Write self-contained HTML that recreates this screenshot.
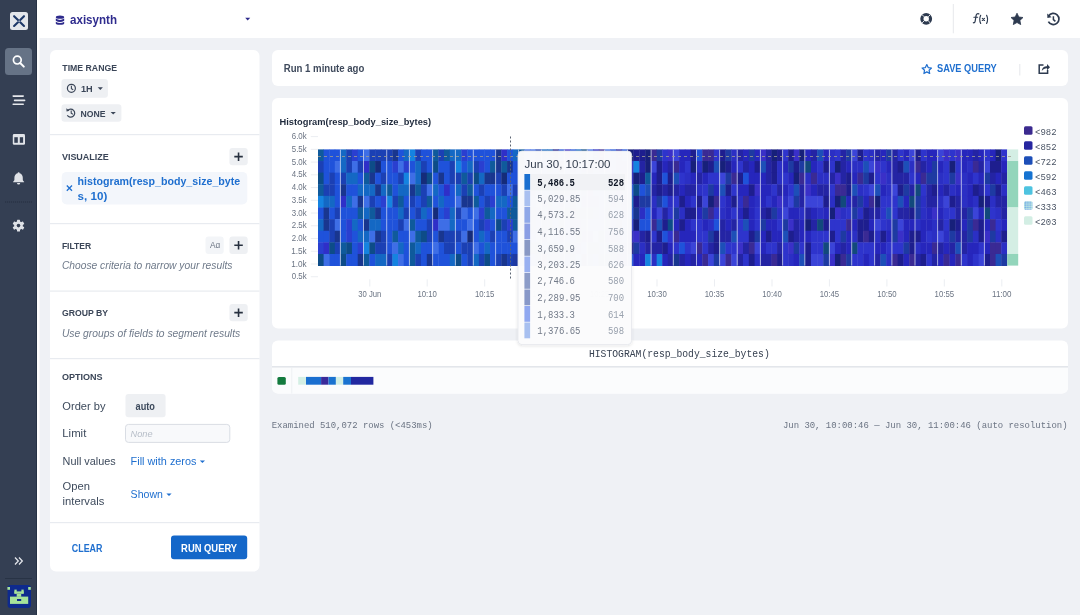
<!DOCTYPE html><html><head><meta charset="utf-8"><style>
html,body{margin:0;padding:0;width:1080px;height:615px;overflow:hidden;background:#eff1f5}
svg{display:block;will-change:transform}
</style></head><body><svg width="1080" height="615" viewBox="0 0 1080 615">
<rect x="0" y="0" width="1080" height="615" fill="#eff1f5"/>
<rect x="0" y="0" width="36" height="615" fill="#343f53"/>
<rect x="36" y="0" width="1" height="615" fill="#273245"/>
<rect x="37" y="0" width="1043" height="38" fill="#ffffff"/>
<rect x="37" y="0" width="2.5" height="615" fill="#ffffff"/>
<rect x="10" y="12" width="18" height="18" rx="2.5" fill="#e3e6eb"/><path d="M14.1 16.2 L18 20.1 M20.2 22.3 L24 26 M24 16.2 L20.2 20.1 M18 22.3 L14.1 26" stroke="#1d3868" stroke-width="2.1" stroke-linecap="round"/><rect x="5" y="48" width="27" height="27" rx="3.5" fill="#667386"/><circle cx="17.3" cy="60.1" r="3.9" fill="none" stroke="#fff" stroke-width="1.7"/><path d="M20.2 63 L23.8 66.6" stroke="#fff" stroke-width="2" stroke-linecap="round"/><path d="M13.2 96.1 H23.2 M14.6 100.4 H24.6 M13.2 104.3 H23.2" stroke="#e6e8ec" stroke-width="1.6" stroke-linecap="round"/><rect x="12.8" y="134.1" width="12.2" height="10.7" rx="1.3" fill="#e1e4e9"/><rect x="14.3" y="137.2" width="3.5" height="5.6" fill="#343f53"/><rect x="19.8" y="137.2" width="3.3" height="5.6" fill="#343f53"/><path d="M18.6 172.3 c-0.6 0 -1 0.4 -1 0.9 c-2.1 0.5 -3.2 2.4 -3.2 4.6 v1.8 c0 0.9 -0.6 1.6 -1.3 2.1 v0.6 h11 v-0.6 c-0.7 -0.5 -1.3 -1.2 -1.3 -2.1 v-1.8 c0 -2.2 -1.1 -4.1 -3.2 -4.6 c0 -0.5 -0.4 -0.9 -1 -0.9z M17 182.9 h3.2 a1.6 1.5 0 0 1 -3.2 0z" fill="#dfe2e7"/><path d="M5 202 H32" stroke="#252f40" stroke-width="1" stroke-dasharray="1.2 0.8"/><g transform="translate(18.5 225.6)" fill="#dfe2e7"><circle r="4.3"/><rect x="-1.5" y="-5.9" width="3" height="3" rx="0.5" transform="rotate(0)"/><rect x="-1.5" y="-5.9" width="3" height="3" rx="0.5" transform="rotate(60)"/><rect x="-1.5" y="-5.9" width="3" height="3" rx="0.5" transform="rotate(120)"/><rect x="-1.5" y="-5.9" width="3" height="3" rx="0.5" transform="rotate(180)"/><rect x="-1.5" y="-5.9" width="3" height="3" rx="0.5" transform="rotate(240)"/><rect x="-1.5" y="-5.9" width="3" height="3" rx="0.5" transform="rotate(300)"/><circle r="1.8" fill="#343f53"/></g><path d="M15 557.5 L18.3 561 L15 564.5 M19 557.5 L22.3 561 L19 564.5" fill="none" stroke="#e1e4e9" stroke-width="1.3"/><path d="M5 578.5 H32" stroke="#283345" stroke-width="1"/><rect x="7.6" y="585" width="23.4" height="23" rx="3" fill="#0e2a8e"/><g fill="#a6e29a"><rect x="7.4" y="587" width="2.6" height="2.8"/><rect x="28.2" y="587" width="2.6" height="2.8"/><rect x="14.4" y="589.6" width="2.3" height="4"/><rect x="21.4" y="589.6" width="2.3" height="4"/><rect x="14.4" y="591.4" width="9.3" height="2.3"/><rect x="16.7" y="593.6" width="4.5" height="3.2"/><rect x="10" y="596.6" width="18.2" height="7.3"/></g><rect x="17" y="599" width="4.2" height="2" fill="#0e2a8e"/>
<g fill="#2e2b8c"><ellipse cx="60" cy="17.2" rx="4.2" ry="1.6"/><path d="M55.8 18.6 q4.2 2.6 8.4 0 v2.2 q-4.2 2.6 -8.4 0z"/><path d="M55.8 21.8 q4.2 2.6 8.4 0 v1.6 q0 1.4 -4.2 1.4 q-4.2 0 -4.2 -1.4z"/></g><path d="M245.2 17.8 H250.2 L247.7 20.5z" fill="#2e2b8c"/><circle cx="926.2" cy="18.8" r="5.9" fill="#2d3a4f"/><circle cx="926.2" cy="18.8" r="2.7" fill="#fff"/><path d="M922.1 14.7 L924.2 16.8 M930.3 14.7 L928.2 16.8 M922.1 22.9 L924.2 20.8 M930.3 22.9 L928.2 20.8" stroke="#fff" stroke-width="0.9"/><path d="M953.3 4 V33.3" stroke="#e6e8ec" stroke-width="1"/><path d="M1017 13.2 L1018.8 17 L1023 17.5 L1019.9 20.4 L1020.7 24.6 L1017 22.5 L1013.3 24.6 L1014.1 20.4 L1011 17.5 L1015.2 17z" fill="#2d3a4f" stroke="#2d3a4f" stroke-width="0.8" stroke-linejoin="round"/><path d="M1048.6 16 A5.6 5.6 0 1 1 1048.4 21.6" fill="none" stroke="#2d3a4f" stroke-width="1.7"/><path d="M1047.2 13.4 L1047.4 18 L1051.6 17.2z" fill="#2d3a4f"/><path d="M1053.4 16.2 V19.6 L1055.4 21.4" fill="none" stroke="#2d3a4f" stroke-width="1.5"/>
<text x="70.00" y="24" font-family="Liberation Sans" font-size="12.8" font-weight="bold" fill="#2f2c8e" textLength="47.00" lengthAdjust="spacingAndGlyphs">axisynth</text>
<g fill="none" stroke="#2d3a4f" stroke-linecap="round"><path d="M978.8 13.9 C977.3 13.3 976.3 14.2 976 16 L975.2 21 C974.9 22.6 974.2 23 973.4 22.7" stroke-width="1.25"/><path d="M973.9 17.2 H977.6" stroke-width="1.15"/><path d="M980.7 15.3 Q978.7 19.4 980.7 23.5" stroke-width="1.15"/><path d="M986.6 15.3 Q988.6 19.4 986.6 23.5" stroke-width="1.15"/><path d="M982.3 18.3 L984.5 20.5 M984.5 18.3 L982.3 20.5" stroke-width="1.1"/></g>
<rect x="50" y="50" width="209.5" height="521.5" rx="6" fill="#ffffff"/>
<text x="62.30" y="71" font-family="Liberation Sans" font-size="9.8" font-weight="bold" fill="#3b4658" textLength="54.80" lengthAdjust="spacingAndGlyphs">TIME RANGE</text>
<rect x="61.5" y="79" width="46.4" height="18.7" rx="3" fill="#eef0f3"/>
<circle cx="71.4" cy="88.3" r="4" fill="none" stroke="#3b4658" stroke-width="1.2"/><path d="M71.4 85.8 V88.6 L73.2 89.8" fill="none" stroke="#3b4658" stroke-width="1.1"/>
<text x="80.90" y="92" font-family="Liberation Sans" font-size="9.5" font-weight="bold" fill="#3b4658" textLength="11.70" lengthAdjust="spacingAndGlyphs">1H</text>
<path d="M97.7 87.3 H102.9 L100.3 89.89999999999999z" fill="#3b4658"/>
<rect x="61.5" y="104.3" width="59.9" height="17.5" rx="3" fill="#eef0f3"/>
<path d="M67.6 110.6 A4 4 0 1 1 67.3 115.2" fill="none" stroke="#3b4658" stroke-width="1.2"/><path d="M66.3 108.2 L66.6 111.6 L69.6 110.8z" fill="#3b4658"/><path d="M71.2 110.5 V113.2 L72.9 114.3" fill="none" stroke="#3b4658" stroke-width="1.1"/>
<text x="80.60" y="117" font-family="Liberation Sans" font-size="9.5" font-weight="bold" fill="#3b4658" textLength="25.00" lengthAdjust="spacingAndGlyphs">NONE</text>
<path d="M110.6 112 H115.8 L113.19999999999999 114.6z" fill="#3b4658"/>
<rect x="50" y="134" width="209.5" height="1.2" fill="#e8ebf0"/>
<text x="61.90" y="160" font-family="Liberation Sans" font-size="9.8" font-weight="bold" fill="#3b4658" textLength="46.90" lengthAdjust="spacingAndGlyphs">VISUALIZE</text>
<rect x="229.4" y="148" width="18.3" height="17.3" rx="3" fill="#eef0f3"/>
<path d="M238.55 152.4 V160.9 M234.3 156.65 H242.8" stroke="#27303f" stroke-width="1.6"/>
<rect x="61.7" y="171.9" width="185.6" height="32.5" rx="5" fill="#f3f6fb"/>
<path d="M66.8 185.5 L72 190.7 M72 185.5 L66.8 190.7" stroke="#1f6fcf" stroke-width="1.3"/>
<text x="77.60" y="185" font-family="Liberation Sans" font-size="11.6" font-weight="bold" fill="#1f6fcf" textLength="162.60" lengthAdjust="spacingAndGlyphs">histogram(resp_body_size_byte</text>
<text x="77.60" y="200" font-family="Liberation Sans" font-size="11.6" font-weight="bold" fill="#1f6fcf">s, 10)</text>
<rect x="50" y="223" width="209.5" height="1.2" fill="#e8ebf0"/>
<text x="61.90" y="249" font-family="Liberation Sans" font-size="9.8" font-weight="bold" fill="#3b4658" textLength="29.30" lengthAdjust="spacingAndGlyphs">FILTER</text>
<rect x="205.5" y="236.6" width="18.2" height="17.3" rx="3" fill="#f3f5f8"/>
<text x="209.90" y="248" font-family="Liberation Sans" font-size="9.2" fill="#6b7483" textLength="10.20" lengthAdjust="spacingAndGlyphs">Aɑ</text>
<rect x="229.4" y="236.6" width="18.3" height="17.3" rx="3" fill="#eef0f3"/>
<path d="M238.55 241.0 V249.5 M234.3 245.25 H242.8" stroke="#27303f" stroke-width="1.6"/>
<text x="61.90" y="269" font-family="Liberation Sans" font-size="10.2" font-style="italic" fill="#6f7a8a" textLength="170.50" lengthAdjust="spacingAndGlyphs">Choose criteria to narrow your results</text>
<rect x="50" y="290.5" width="209.5" height="1.2" fill="#e8ebf0"/>
<text x="61.90" y="316" font-family="Liberation Sans" font-size="9.8" font-weight="bold" fill="#3b4658" textLength="46.20" lengthAdjust="spacingAndGlyphs">GROUP BY</text>
<rect x="229.4" y="304" width="18.3" height="17.3" rx="3" fill="#eef0f3"/>
<path d="M238.55 308.4 V316.9 M234.3 312.65 H242.8" stroke="#27303f" stroke-width="1.6"/>
<text x="61.90" y="337" font-family="Liberation Sans" font-size="10.2" font-style="italic" fill="#6f7a8a" textLength="178.30" lengthAdjust="spacingAndGlyphs">Use groups of fields to segment results</text>
<rect x="50" y="358" width="209.5" height="1.2" fill="#e8ebf0"/>
<text x="61.90" y="380" font-family="Liberation Sans" font-size="9.8" font-weight="bold" fill="#3b4658" textLength="40.70" lengthAdjust="spacingAndGlyphs">OPTIONS</text>
<text x="62.30" y="410" font-family="Liberation Sans" font-size="11.2" fill="#3d4a5c" textLength="43.20" lengthAdjust="spacingAndGlyphs">Order by</text>
<rect x="125.5" y="393.9" width="40.1" height="23.4" rx="3" fill="#eef0f3"/>
<text x="135.60" y="410" font-family="Liberation Sans" font-size="10.6" font-weight="bold" fill="#3d4a5c" textLength="19.40" lengthAdjust="spacingAndGlyphs">auto</text>
<text x="62.30" y="437" font-family="Liberation Sans" font-size="11.2" fill="#3d4a5c" textLength="24.00" lengthAdjust="spacingAndGlyphs">Limit</text>
<rect x="125.5" y="424.4" width="104.3" height="18" rx="3" fill="#f8f9fb" stroke="#d9dde4" stroke-width="1"/>
<text x="130.60" y="437" font-family="Liberation Sans" font-size="9.5" font-style="italic" fill="#b7bec8" textLength="22.00" lengthAdjust="spacingAndGlyphs">None</text>
<text x="62.60" y="465" font-family="Liberation Sans" font-size="11.2" fill="#3d4a5c" textLength="53.10" lengthAdjust="spacingAndGlyphs">Null values</text>
<text x="130.60" y="465" font-family="Liberation Sans" font-size="11.2" fill="#1f6fcf" textLength="65.90" lengthAdjust="spacingAndGlyphs">Fill with zeros</text>
<path d="M199.8 460.5 H205.0 L202.4 463.1z" fill="#1f6fcf"/>
<text x="62.60" y="490" font-family="Liberation Sans" font-size="11.2" fill="#3d4a5c">Open</text>
<text x="62.60" y="505" font-family="Liberation Sans" font-size="11.2" fill="#3d4a5c">intervals</text>
<text x="130.60" y="498" font-family="Liberation Sans" font-size="11.2" fill="#1f6fcf" textLength="32.30" lengthAdjust="spacingAndGlyphs">Shown</text>
<path d="M166.4 493.5 H171.6 L169.0 496.1z" fill="#1f6fcf"/>
<rect x="50" y="522" width="209.5" height="1.2" fill="#e8ebf0"/>
<text x="71.80" y="551.5" font-family="Liberation Sans" font-size="10.4" font-weight="bold" fill="#1f6fcf" textLength="30.70" lengthAdjust="spacingAndGlyphs">CLEAR</text>
<rect x="171" y="535.5" width="76.2" height="23.7" rx="3" fill="#1467c9"/>
<text x="181.10" y="551.5" font-family="Liberation Sans" font-size="10.4" font-weight="bold" fill="#ffffff" textLength="56.00" lengthAdjust="spacingAndGlyphs">RUN QUERY</text>
<rect x="272" y="50" width="796" height="36" rx="6" fill="#ffffff"/>
<text x="283.70" y="72" font-family="Liberation Sans" font-size="10" font-weight="bold" fill="#3f4a5c" textLength="80.70" lengthAdjust="spacingAndGlyphs">Run 1 minute ago</text>
<path d="M926.8 64.6 L928.2 67.6 L931.5 68 L929.1 70.3 L929.7 73.5 L926.8 71.9 L923.9 73.5 L924.5 70.3 L922.1 68 L925.4 67.6z" fill="none" stroke="#1f6fcf" stroke-width="1.2" stroke-linejoin="round"/>
<text x="937.00" y="72" font-family="Liberation Sans" font-size="10.4" font-weight="bold" fill="#1f6fcf" textLength="59.70" lengthAdjust="spacingAndGlyphs">SAVE QUERY</text>
<rect x="1019.3" y="64" width="1" height="11.5" fill="#e5e7eb"/>
<path d="M1043.5 65 H1039.2 V73.2 H1047.6 V70" fill="none" stroke="#2d3a4f" stroke-width="1.5"/><path d="M1041.8 71 C1042 67.5 1044.5 66.2 1047 66.2 V64 L1050 67.2 L1047 70.2 V68.2 C1045 68.2 1043 69 1041.8 71z" fill="#2d3a4f"/>
<rect x="272" y="98" width="796" height="230.5" rx="6" fill="#ffffff"/>
<text x="279.50" y="125" font-family="Liberation Sans" font-size="9.4" font-weight="bold" fill="#1f2a3c" textLength="151.60" lengthAdjust="spacingAndGlyphs">Histogram(resp_body_size_bytes)</text>
<rect x="310.8" y="136.1" width="7.2" height="1" fill="#eceef2"/>
<text x="291.80" y="139" font-family="Liberation Sans" font-size="8.2" fill="#6b7483" textLength="14.89" lengthAdjust="spacingAndGlyphs">6.0k</text>
<rect x="310.8" y="148.84" width="7.2" height="1" fill="#eceef2"/>
<text x="291.80" y="152" font-family="Liberation Sans" font-size="8.2" fill="#6b7483" textLength="14.89" lengthAdjust="spacingAndGlyphs">5.5k</text>
<rect x="310.8" y="161.57999999999998" width="7.2" height="1" fill="#eceef2"/>
<text x="291.80" y="165" font-family="Liberation Sans" font-size="8.2" fill="#6b7483" textLength="14.89" lengthAdjust="spacingAndGlyphs">5.0k</text>
<rect x="310.8" y="174.32" width="7.2" height="1" fill="#eceef2"/>
<text x="291.80" y="177" font-family="Liberation Sans" font-size="8.2" fill="#6b7483" textLength="14.89" lengthAdjust="spacingAndGlyphs">4.5k</text>
<rect x="310.8" y="187.06" width="7.2" height="1" fill="#eceef2"/>
<text x="291.80" y="190" font-family="Liberation Sans" font-size="8.2" fill="#6b7483" textLength="14.89" lengthAdjust="spacingAndGlyphs">4.0k</text>
<rect x="310.8" y="199.8" width="7.2" height="1" fill="#eceef2"/>
<text x="291.80" y="203" font-family="Liberation Sans" font-size="8.2" fill="#6b7483" textLength="14.89" lengthAdjust="spacingAndGlyphs">3.5k</text>
<rect x="310.8" y="212.54" width="7.2" height="1" fill="#eceef2"/>
<text x="291.80" y="216" font-family="Liberation Sans" font-size="8.2" fill="#6b7483" textLength="14.89" lengthAdjust="spacingAndGlyphs">3.0k</text>
<rect x="310.8" y="225.28" width="7.2" height="1" fill="#eceef2"/>
<text x="291.80" y="228" font-family="Liberation Sans" font-size="8.2" fill="#6b7483" textLength="14.89" lengthAdjust="spacingAndGlyphs">2.5k</text>
<rect x="310.8" y="238.01999999999998" width="7.2" height="1" fill="#eceef2"/>
<text x="291.80" y="241" font-family="Liberation Sans" font-size="8.2" fill="#6b7483" textLength="14.89" lengthAdjust="spacingAndGlyphs">2.0k</text>
<rect x="310.8" y="250.76" width="7.2" height="1" fill="#eceef2"/>
<text x="291.19" y="254" font-family="Liberation Sans" font-size="8.2" fill="#6b7483">1.5k</text>
<rect x="310.8" y="263.5" width="7.2" height="1" fill="#eceef2"/>
<text x="291.19" y="267" font-family="Liberation Sans" font-size="8.2" fill="#6b7483">1.0k</text>
<rect x="310.8" y="276.24" width="7.2" height="1" fill="#eceef2"/>
<text x="291.80" y="279" font-family="Liberation Sans" font-size="8.2" fill="#6b7483" textLength="14.89" lengthAdjust="spacingAndGlyphs">0.5k</text>
<g><rect x="318.00" y="149.40" width="6.00" height="12.02" fill="#0f5a9c"/><rect x="318.00" y="161.02" width="6.00" height="12.02" fill="#1b40b4"/><rect x="318.00" y="172.64" width="6.00" height="12.02" fill="#0d4c88"/><rect x="318.00" y="184.26" width="6.00" height="12.02" fill="#0f5a9c"/><rect x="318.00" y="195.88" width="6.00" height="12.02" fill="#1583e0"/><rect x="318.00" y="207.50" width="6.00" height="12.02" fill="#1f52da"/><rect x="318.00" y="219.12" width="6.00" height="12.02" fill="#1468c4"/><rect x="318.00" y="230.74" width="6.00" height="12.02" fill="#1f52da"/><rect x="318.00" y="242.36" width="6.00" height="12.02" fill="#2a3fd0"/><rect x="318.00" y="253.98" width="6.00" height="12.02" fill="#0d4c88"/><rect x="323.60" y="149.40" width="6.00" height="12.02" fill="#1f52da"/><rect x="323.60" y="161.02" width="6.00" height="12.02" fill="#1f52da"/><rect x="323.60" y="172.64" width="6.00" height="12.02" fill="#1f52da"/><rect x="323.60" y="184.26" width="6.00" height="12.02" fill="#1b40b4"/><rect x="323.60" y="195.88" width="6.00" height="12.02" fill="#1468c4"/><rect x="323.60" y="207.50" width="6.00" height="12.02" fill="#19368f"/><rect x="323.60" y="219.12" width="6.00" height="12.02" fill="#19368f"/><rect x="323.60" y="230.74" width="6.00" height="12.02" fill="#1f52da"/><rect x="323.60" y="242.36" width="6.00" height="12.02" fill="#2f2fc8"/><rect x="323.60" y="253.98" width="6.00" height="12.02" fill="#3e6ee6"/><rect x="329.20" y="149.40" width="6.00" height="12.02" fill="#1f52da"/><rect x="329.20" y="161.02" width="6.00" height="12.02" fill="#1f52da"/><rect x="329.20" y="172.64" width="6.00" height="12.02" fill="#1b40b4"/><rect x="329.20" y="184.26" width="6.00" height="12.02" fill="#1b40b4"/><rect x="329.20" y="195.88" width="6.00" height="12.02" fill="#1468c4"/><rect x="329.20" y="207.50" width="6.00" height="12.02" fill="#1f52da"/><rect x="329.20" y="219.12" width="6.00" height="12.02" fill="#1b40b4"/><rect x="329.20" y="230.74" width="6.00" height="12.02" fill="#1b40b4"/><rect x="329.20" y="242.36" width="6.00" height="12.02" fill="#0d4c88"/><rect x="329.20" y="253.98" width="6.00" height="12.02" fill="#1f52da"/><rect x="334.80" y="149.40" width="6.00" height="12.02" fill="#1f52da"/><rect x="334.80" y="161.02" width="6.00" height="12.02" fill="#3e6ee6"/><rect x="334.80" y="172.64" width="6.00" height="12.02" fill="#1f52da"/><rect x="334.80" y="184.26" width="6.00" height="12.02" fill="#1f52da"/><rect x="334.80" y="195.88" width="6.00" height="12.02" fill="#1f52da"/><rect x="334.80" y="207.50" width="6.00" height="12.02" fill="#1b40b4"/><rect x="334.80" y="219.12" width="6.00" height="12.02" fill="#3e6ee6"/><rect x="334.80" y="230.74" width="6.00" height="12.02" fill="#19368f"/><rect x="334.80" y="242.36" width="6.00" height="12.02" fill="#1b40b4"/><rect x="334.80" y="253.98" width="6.00" height="12.02" fill="#1f52da"/><rect x="340.40" y="149.40" width="6.18" height="12.02" fill="#1468c4"/><rect x="340.40" y="161.02" width="6.18" height="12.02" fill="#1468c4"/><rect x="340.40" y="172.64" width="6.18" height="12.02" fill="#1b40b4"/><rect x="340.40" y="184.26" width="6.18" height="12.02" fill="#19368f"/><rect x="340.40" y="195.88" width="6.18" height="12.02" fill="#2f2fc8"/><rect x="340.40" y="207.50" width="6.18" height="12.02" fill="#1f52da"/><rect x="340.40" y="219.12" width="6.18" height="12.02" fill="#1f52da"/><rect x="340.40" y="230.74" width="6.18" height="12.02" fill="#1f52da"/><rect x="340.40" y="242.36" width="6.18" height="12.02" fill="#0f5a9c"/><rect x="340.40" y="253.98" width="6.18" height="12.02" fill="#0d4c88"/><rect x="346.17" y="149.40" width="6.18" height="12.02" fill="#1b40b4"/><rect x="346.17" y="161.02" width="6.18" height="12.02" fill="#1b40b4"/><rect x="346.17" y="172.64" width="6.18" height="12.02" fill="#1468c4"/><rect x="346.17" y="184.26" width="6.18" height="12.02" fill="#1f52da"/><rect x="346.17" y="195.88" width="6.18" height="12.02" fill="#1468c4"/><rect x="346.17" y="207.50" width="6.18" height="12.02" fill="#1f52da"/><rect x="346.17" y="219.12" width="6.18" height="12.02" fill="#2a3fd0"/><rect x="346.17" y="230.74" width="6.18" height="12.02" fill="#2a3fd0"/><rect x="346.17" y="242.36" width="6.18" height="12.02" fill="#0d4c88"/><rect x="346.17" y="253.98" width="6.18" height="12.02" fill="#1f52da"/><rect x="351.95" y="149.40" width="6.18" height="12.02" fill="#2a3fd0"/><rect x="351.95" y="161.02" width="6.18" height="12.02" fill="#3e6ee6"/><rect x="351.95" y="172.64" width="6.18" height="12.02" fill="#1468c4"/><rect x="351.95" y="184.26" width="6.18" height="12.02" fill="#1f52da"/><rect x="351.95" y="195.88" width="6.18" height="12.02" fill="#3e6ee6"/><rect x="351.95" y="207.50" width="6.18" height="12.02" fill="#1f52da"/><rect x="351.95" y="219.12" width="6.18" height="12.02" fill="#1468c4"/><rect x="351.95" y="230.74" width="6.18" height="12.02" fill="#1f52da"/><rect x="351.95" y="242.36" width="6.18" height="12.02" fill="#1f52da"/><rect x="351.95" y="253.98" width="6.18" height="12.02" fill="#1f52da"/><rect x="357.73" y="149.40" width="6.18" height="12.02" fill="#1f52da"/><rect x="357.73" y="161.02" width="6.18" height="12.02" fill="#1b40b4"/><rect x="357.73" y="172.64" width="6.18" height="12.02" fill="#1f52da"/><rect x="357.73" y="184.26" width="6.18" height="12.02" fill="#1468c4"/><rect x="357.73" y="195.88" width="6.18" height="12.02" fill="#19368f"/><rect x="357.73" y="207.50" width="6.18" height="12.02" fill="#0f5a9c"/><rect x="357.73" y="219.12" width="6.18" height="12.02" fill="#1f52da"/><rect x="357.73" y="230.74" width="6.18" height="12.02" fill="#1468c4"/><rect x="357.73" y="242.36" width="6.18" height="12.02" fill="#2a3fd0"/><rect x="357.73" y="253.98" width="6.18" height="12.02" fill="#19368f"/><rect x="363.50" y="149.40" width="6.20" height="12.02" fill="#3e6ee6"/><rect x="363.50" y="161.02" width="6.20" height="12.02" fill="#2f2fc8"/><rect x="363.50" y="172.64" width="6.20" height="12.02" fill="#0f5a9c"/><rect x="363.50" y="184.26" width="6.20" height="12.02" fill="#1468c4"/><rect x="363.50" y="195.88" width="6.20" height="12.02" fill="#3e6ee6"/><rect x="363.50" y="207.50" width="6.20" height="12.02" fill="#1468c4"/><rect x="363.50" y="219.12" width="6.20" height="12.02" fill="#19368f"/><rect x="363.50" y="230.74" width="6.20" height="12.02" fill="#1468c4"/><rect x="363.50" y="242.36" width="6.20" height="12.02" fill="#1583e0"/><rect x="363.50" y="253.98" width="6.20" height="12.02" fill="#0f5a9c"/><rect x="369.30" y="149.40" width="6.20" height="12.02" fill="#1b40b4"/><rect x="369.30" y="161.02" width="6.20" height="12.02" fill="#0d4c88"/><rect x="369.30" y="172.64" width="6.20" height="12.02" fill="#19368f"/><rect x="369.30" y="184.26" width="6.20" height="12.02" fill="#1468c4"/><rect x="369.30" y="195.88" width="6.20" height="12.02" fill="#1b40b4"/><rect x="369.30" y="207.50" width="6.20" height="12.02" fill="#0f5a9c"/><rect x="369.30" y="219.12" width="6.20" height="12.02" fill="#1468c4"/><rect x="369.30" y="230.74" width="6.20" height="12.02" fill="#3e6ee6"/><rect x="369.30" y="242.36" width="6.20" height="12.02" fill="#0d4c88"/><rect x="369.30" y="253.98" width="6.20" height="12.02" fill="#1f52da"/><rect x="375.10" y="149.40" width="6.20" height="12.02" fill="#1b40b4"/><rect x="375.10" y="161.02" width="6.20" height="12.02" fill="#152c7a"/><rect x="375.10" y="172.64" width="6.20" height="12.02" fill="#1f52da"/><rect x="375.10" y="184.26" width="6.20" height="12.02" fill="#19368f"/><rect x="375.10" y="195.88" width="6.20" height="12.02" fill="#1f52da"/><rect x="375.10" y="207.50" width="6.20" height="12.02" fill="#19368f"/><rect x="375.10" y="219.12" width="6.20" height="12.02" fill="#1468c4"/><rect x="375.10" y="230.74" width="6.20" height="12.02" fill="#19368f"/><rect x="375.10" y="242.36" width="6.20" height="12.02" fill="#1b40b4"/><rect x="375.10" y="253.98" width="6.20" height="12.02" fill="#1468c4"/><rect x="380.90" y="149.40" width="6.20" height="12.02" fill="#1b40b4"/><rect x="380.90" y="161.02" width="6.20" height="12.02" fill="#1f52da"/><rect x="380.90" y="172.64" width="6.20" height="12.02" fill="#1b40b4"/><rect x="380.90" y="184.26" width="6.20" height="12.02" fill="#1468c4"/><rect x="380.90" y="195.88" width="6.20" height="12.02" fill="#2a3fd0"/><rect x="380.90" y="207.50" width="6.20" height="12.02" fill="#1f52da"/><rect x="380.90" y="219.12" width="6.20" height="12.02" fill="#1f52da"/><rect x="380.90" y="230.74" width="6.20" height="12.02" fill="#1b40b4"/><rect x="380.90" y="242.36" width="6.20" height="12.02" fill="#1b40b4"/><rect x="380.90" y="253.98" width="6.20" height="12.02" fill="#1468c4"/><rect x="386.70" y="149.40" width="6.07" height="12.02" fill="#1b40b4"/><rect x="386.70" y="161.02" width="6.07" height="12.02" fill="#1f52da"/><rect x="386.70" y="172.64" width="6.07" height="12.02" fill="#1f52da"/><rect x="386.70" y="184.26" width="6.07" height="12.02" fill="#0f5a9c"/><rect x="386.70" y="195.88" width="6.07" height="12.02" fill="#1583e0"/><rect x="386.70" y="207.50" width="6.07" height="12.02" fill="#1f52da"/><rect x="386.70" y="219.12" width="6.07" height="12.02" fill="#1f52da"/><rect x="386.70" y="230.74" width="6.07" height="12.02" fill="#1f52da"/><rect x="386.70" y="242.36" width="6.07" height="12.02" fill="#1f52da"/><rect x="386.70" y="253.98" width="6.07" height="12.02" fill="#1b40b4"/><rect x="392.38" y="149.40" width="6.07" height="12.02" fill="#19368f"/><rect x="392.38" y="161.02" width="6.07" height="12.02" fill="#2a3fd0"/><rect x="392.38" y="172.64" width="6.07" height="12.02" fill="#1f52da"/><rect x="392.38" y="184.26" width="6.07" height="12.02" fill="#1f52da"/><rect x="392.38" y="195.88" width="6.07" height="12.02" fill="#1b40b4"/><rect x="392.38" y="207.50" width="6.07" height="12.02" fill="#1f52da"/><rect x="392.38" y="219.12" width="6.07" height="12.02" fill="#1f52da"/><rect x="392.38" y="230.74" width="6.07" height="12.02" fill="#0f5a9c"/><rect x="392.38" y="242.36" width="6.07" height="12.02" fill="#3e6ee6"/><rect x="392.38" y="253.98" width="6.07" height="12.02" fill="#1583e0"/><rect x="398.05" y="149.40" width="6.07" height="12.02" fill="#1f52da"/><rect x="398.05" y="161.02" width="6.07" height="12.02" fill="#3e6ee6"/><rect x="398.05" y="172.64" width="6.07" height="12.02" fill="#1b40b4"/><rect x="398.05" y="184.26" width="6.07" height="12.02" fill="#1468c4"/><rect x="398.05" y="195.88" width="6.07" height="12.02" fill="#0f5a9c"/><rect x="398.05" y="207.50" width="6.07" height="12.02" fill="#1468c4"/><rect x="398.05" y="219.12" width="6.07" height="12.02" fill="#1b40b4"/><rect x="398.05" y="230.74" width="6.07" height="12.02" fill="#1f52da"/><rect x="398.05" y="242.36" width="6.07" height="12.02" fill="#1468c4"/><rect x="398.05" y="253.98" width="6.07" height="12.02" fill="#3e6ee6"/><rect x="403.72" y="149.40" width="6.07" height="12.02" fill="#1468c4"/><rect x="403.72" y="161.02" width="6.07" height="12.02" fill="#2a3fd0"/><rect x="403.72" y="172.64" width="6.07" height="12.02" fill="#1583e0"/><rect x="403.72" y="184.26" width="6.07" height="12.02" fill="#1468c4"/><rect x="403.72" y="195.88" width="6.07" height="12.02" fill="#1f52da"/><rect x="403.72" y="207.50" width="6.07" height="12.02" fill="#1b40b4"/><rect x="403.72" y="219.12" width="6.07" height="12.02" fill="#3e6ee6"/><rect x="403.72" y="230.74" width="6.07" height="12.02" fill="#1f52da"/><rect x="403.72" y="242.36" width="6.07" height="12.02" fill="#1f52da"/><rect x="403.72" y="253.98" width="6.07" height="12.02" fill="#1f52da"/><rect x="409.40" y="149.40" width="6.20" height="12.02" fill="#1583e0"/><rect x="409.40" y="161.02" width="6.20" height="12.02" fill="#1f52da"/><rect x="409.40" y="172.64" width="6.20" height="12.02" fill="#3e6ee6"/><rect x="409.40" y="184.26" width="6.20" height="12.02" fill="#19368f"/><rect x="409.40" y="195.88" width="6.20" height="12.02" fill="#1b40b4"/><rect x="409.40" y="207.50" width="6.20" height="12.02" fill="#1f52da"/><rect x="409.40" y="219.12" width="6.20" height="12.02" fill="#0f5a9c"/><rect x="409.40" y="230.74" width="6.20" height="12.02" fill="#3e6ee6"/><rect x="409.40" y="242.36" width="6.20" height="12.02" fill="#0f5a9c"/><rect x="409.40" y="253.98" width="6.20" height="12.02" fill="#0f5a9c"/><rect x="415.20" y="149.40" width="6.20" height="12.02" fill="#1b40b4"/><rect x="415.20" y="161.02" width="6.20" height="12.02" fill="#1468c4"/><rect x="415.20" y="172.64" width="6.20" height="12.02" fill="#1468c4"/><rect x="415.20" y="184.26" width="6.20" height="12.02" fill="#0f5a9c"/><rect x="415.20" y="195.88" width="6.20" height="12.02" fill="#1f52da"/><rect x="415.20" y="207.50" width="6.20" height="12.02" fill="#1b40b4"/><rect x="415.20" y="219.12" width="6.20" height="12.02" fill="#1f52da"/><rect x="415.20" y="230.74" width="6.20" height="12.02" fill="#0f5a9c"/><rect x="415.20" y="242.36" width="6.20" height="12.02" fill="#1468c4"/><rect x="415.20" y="253.98" width="6.20" height="12.02" fill="#1b40b4"/><rect x="421.00" y="149.40" width="6.20" height="12.02" fill="#1f52da"/><rect x="421.00" y="161.02" width="6.20" height="12.02" fill="#1b40b4"/><rect x="421.00" y="172.64" width="6.20" height="12.02" fill="#152c7a"/><rect x="421.00" y="184.26" width="6.20" height="12.02" fill="#1b40b4"/><rect x="421.00" y="195.88" width="6.20" height="12.02" fill="#1b40b4"/><rect x="421.00" y="207.50" width="6.20" height="12.02" fill="#1468c4"/><rect x="421.00" y="219.12" width="6.20" height="12.02" fill="#1f52da"/><rect x="421.00" y="230.74" width="6.20" height="12.02" fill="#0d4c88"/><rect x="421.00" y="242.36" width="6.20" height="12.02" fill="#1f52da"/><rect x="421.00" y="253.98" width="6.20" height="12.02" fill="#1f52da"/><rect x="426.80" y="149.40" width="6.20" height="12.02" fill="#1f52da"/><rect x="426.80" y="161.02" width="6.20" height="12.02" fill="#1f52da"/><rect x="426.80" y="172.64" width="6.20" height="12.02" fill="#0d4c88"/><rect x="426.80" y="184.26" width="6.20" height="12.02" fill="#3e6ee6"/><rect x="426.80" y="195.88" width="6.20" height="12.02" fill="#0f5a9c"/><rect x="426.80" y="207.50" width="6.20" height="12.02" fill="#1f52da"/><rect x="426.80" y="219.12" width="6.20" height="12.02" fill="#1b40b4"/><rect x="426.80" y="230.74" width="6.20" height="12.02" fill="#1b40b4"/><rect x="426.80" y="242.36" width="6.20" height="12.02" fill="#1f52da"/><rect x="426.80" y="253.98" width="6.20" height="12.02" fill="#19368f"/><rect x="432.60" y="149.40" width="6.10" height="12.02" fill="#0f5a9c"/><rect x="432.60" y="161.02" width="6.10" height="12.02" fill="#0d4c88"/><rect x="432.60" y="172.64" width="6.10" height="12.02" fill="#1f52da"/><rect x="432.60" y="184.26" width="6.10" height="12.02" fill="#1468c4"/><rect x="432.60" y="195.88" width="6.10" height="12.02" fill="#1f52da"/><rect x="432.60" y="207.50" width="6.10" height="12.02" fill="#152c7a"/><rect x="432.60" y="219.12" width="6.10" height="12.02" fill="#2f2fc8"/><rect x="432.60" y="230.74" width="6.10" height="12.02" fill="#1f52da"/><rect x="432.60" y="242.36" width="6.10" height="12.02" fill="#3e6ee6"/><rect x="432.60" y="253.98" width="6.10" height="12.02" fill="#1f52da"/><rect x="438.30" y="149.40" width="6.10" height="12.02" fill="#1b40b4"/><rect x="438.30" y="161.02" width="6.10" height="12.02" fill="#1f52da"/><rect x="438.30" y="172.64" width="6.10" height="12.02" fill="#19368f"/><rect x="438.30" y="184.26" width="6.10" height="12.02" fill="#1f52da"/><rect x="438.30" y="195.88" width="6.10" height="12.02" fill="#1468c4"/><rect x="438.30" y="207.50" width="6.10" height="12.02" fill="#1f52da"/><rect x="438.30" y="219.12" width="6.10" height="12.02" fill="#3e6ee6"/><rect x="438.30" y="230.74" width="6.10" height="12.02" fill="#19368f"/><rect x="438.30" y="242.36" width="6.10" height="12.02" fill="#1f52da"/><rect x="438.30" y="253.98" width="6.10" height="12.02" fill="#1f52da"/><rect x="444.00" y="149.40" width="6.10" height="12.02" fill="#0f5a9c"/><rect x="444.00" y="161.02" width="6.10" height="12.02" fill="#1f52da"/><rect x="444.00" y="172.64" width="6.10" height="12.02" fill="#1f52da"/><rect x="444.00" y="184.26" width="6.10" height="12.02" fill="#2f2fc8"/><rect x="444.00" y="195.88" width="6.10" height="12.02" fill="#1f52da"/><rect x="444.00" y="207.50" width="6.10" height="12.02" fill="#2a3fd0"/><rect x="444.00" y="219.12" width="6.10" height="12.02" fill="#3e6ee6"/><rect x="444.00" y="230.74" width="6.10" height="12.02" fill="#1b40b4"/><rect x="444.00" y="242.36" width="6.10" height="12.02" fill="#1b40b4"/><rect x="444.00" y="253.98" width="6.10" height="12.02" fill="#1f52da"/><rect x="449.70" y="149.40" width="6.10" height="12.02" fill="#1468c4"/><rect x="449.70" y="161.02" width="6.10" height="12.02" fill="#1b40b4"/><rect x="449.70" y="172.64" width="6.10" height="12.02" fill="#1b40b4"/><rect x="449.70" y="184.26" width="6.10" height="12.02" fill="#1f52da"/><rect x="449.70" y="195.88" width="6.10" height="12.02" fill="#1f52da"/><rect x="449.70" y="207.50" width="6.10" height="12.02" fill="#1468c4"/><rect x="449.70" y="219.12" width="6.10" height="12.02" fill="#1468c4"/><rect x="449.70" y="230.74" width="6.10" height="12.02" fill="#1b40b4"/><rect x="449.70" y="242.36" width="6.10" height="12.02" fill="#1b40b4"/><rect x="449.70" y="253.98" width="6.10" height="12.02" fill="#1468c4"/><rect x="455.40" y="149.40" width="6.37" height="12.02" fill="#1468c4"/><rect x="455.40" y="161.02" width="6.37" height="12.02" fill="#1583e0"/><rect x="455.40" y="172.64" width="6.37" height="12.02" fill="#1b40b4"/><rect x="455.40" y="184.26" width="6.37" height="12.02" fill="#1468c4"/><rect x="455.40" y="195.88" width="6.37" height="12.02" fill="#3e6ee6"/><rect x="455.40" y="207.50" width="6.37" height="12.02" fill="#1b40b4"/><rect x="455.40" y="219.12" width="6.37" height="12.02" fill="#1f52da"/><rect x="455.40" y="230.74" width="6.37" height="12.02" fill="#1b40b4"/><rect x="455.40" y="242.36" width="6.37" height="12.02" fill="#1f52da"/><rect x="455.40" y="253.98" width="6.37" height="12.02" fill="#0d4c88"/><rect x="461.37" y="149.40" width="6.37" height="12.02" fill="#2a3fd0"/><rect x="461.37" y="161.02" width="6.37" height="12.02" fill="#1f52da"/><rect x="461.37" y="172.64" width="6.37" height="12.02" fill="#0f5a9c"/><rect x="461.37" y="184.26" width="6.37" height="12.02" fill="#1b40b4"/><rect x="461.37" y="195.88" width="6.37" height="12.02" fill="#19368f"/><rect x="461.37" y="207.50" width="6.37" height="12.02" fill="#3e6ee6"/><rect x="461.37" y="219.12" width="6.37" height="12.02" fill="#1f52da"/><rect x="461.37" y="230.74" width="6.37" height="12.02" fill="#3e6ee6"/><rect x="461.37" y="242.36" width="6.37" height="12.02" fill="#1b40b4"/><rect x="461.37" y="253.98" width="6.37" height="12.02" fill="#1f52da"/><rect x="467.33" y="149.40" width="6.37" height="12.02" fill="#1f52da"/><rect x="467.33" y="161.02" width="6.37" height="12.02" fill="#1468c4"/><rect x="467.33" y="172.64" width="6.37" height="12.02" fill="#1b40b4"/><rect x="467.33" y="184.26" width="6.37" height="12.02" fill="#0f5a9c"/><rect x="467.33" y="195.88" width="6.37" height="12.02" fill="#19368f"/><rect x="467.33" y="207.50" width="6.37" height="12.02" fill="#1f52da"/><rect x="467.33" y="219.12" width="6.37" height="12.02" fill="#3e6ee6"/><rect x="467.33" y="230.74" width="6.37" height="12.02" fill="#152c7a"/><rect x="467.33" y="242.36" width="6.37" height="12.02" fill="#1b40b4"/><rect x="467.33" y="253.98" width="6.37" height="12.02" fill="#1b40b4"/><rect x="473.30" y="149.40" width="5.98" height="12.02" fill="#1f52da"/><rect x="473.30" y="161.02" width="5.98" height="12.02" fill="#1b40b4"/><rect x="473.30" y="172.64" width="5.98" height="12.02" fill="#0d4c88"/><rect x="473.30" y="184.26" width="5.98" height="12.02" fill="#1f52da"/><rect x="473.30" y="195.88" width="5.98" height="12.02" fill="#0f5a9c"/><rect x="473.30" y="207.50" width="5.98" height="12.02" fill="#3e6ee6"/><rect x="473.30" y="219.12" width="5.98" height="12.02" fill="#1f52da"/><rect x="473.30" y="230.74" width="5.98" height="12.02" fill="#1f52da"/><rect x="473.30" y="242.36" width="5.98" height="12.02" fill="#3e6ee6"/><rect x="473.30" y="253.98" width="5.98" height="12.02" fill="#1468c4"/><rect x="478.88" y="149.40" width="5.98" height="12.02" fill="#1f52da"/><rect x="478.88" y="161.02" width="5.98" height="12.02" fill="#2a3fd0"/><rect x="478.88" y="172.64" width="5.98" height="12.02" fill="#1468c4"/><rect x="478.88" y="184.26" width="5.98" height="12.02" fill="#1b40b4"/><rect x="478.88" y="195.88" width="5.98" height="12.02" fill="#1f52da"/><rect x="478.88" y="207.50" width="5.98" height="12.02" fill="#2a3fd0"/><rect x="478.88" y="219.12" width="5.98" height="12.02" fill="#1b40b4"/><rect x="478.88" y="230.74" width="5.98" height="12.02" fill="#1468c4"/><rect x="478.88" y="242.36" width="5.98" height="12.02" fill="#1f52da"/><rect x="478.88" y="253.98" width="5.98" height="12.02" fill="#1b40b4"/><rect x="484.45" y="149.40" width="5.98" height="12.02" fill="#1f52da"/><rect x="484.45" y="161.02" width="5.98" height="12.02" fill="#1f52da"/><rect x="484.45" y="172.64" width="5.98" height="12.02" fill="#19368f"/><rect x="484.45" y="184.26" width="5.98" height="12.02" fill="#1f52da"/><rect x="484.45" y="195.88" width="5.98" height="12.02" fill="#1b40b4"/><rect x="484.45" y="207.50" width="5.98" height="12.02" fill="#0f5a9c"/><rect x="484.45" y="219.12" width="5.98" height="12.02" fill="#2a3fd0"/><rect x="484.45" y="230.74" width="5.98" height="12.02" fill="#1f52da"/><rect x="484.45" y="242.36" width="5.98" height="12.02" fill="#1468c4"/><rect x="484.45" y="253.98" width="5.98" height="12.02" fill="#0d4c88"/><rect x="490.03" y="149.40" width="5.98" height="12.02" fill="#1f52da"/><rect x="490.03" y="161.02" width="5.98" height="12.02" fill="#0f5a9c"/><rect x="490.03" y="172.64" width="5.98" height="12.02" fill="#19368f"/><rect x="490.03" y="184.26" width="5.98" height="12.02" fill="#1f52da"/><rect x="490.03" y="195.88" width="5.98" height="12.02" fill="#2a3fd0"/><rect x="490.03" y="207.50" width="5.98" height="12.02" fill="#1468c4"/><rect x="490.03" y="219.12" width="5.98" height="12.02" fill="#1f52da"/><rect x="490.03" y="230.74" width="5.98" height="12.02" fill="#1b40b4"/><rect x="490.03" y="242.36" width="5.98" height="12.02" fill="#1f52da"/><rect x="490.03" y="253.98" width="5.98" height="12.02" fill="#1f52da"/><rect x="495.60" y="149.40" width="6.12" height="12.02" fill="#19368f"/><rect x="495.60" y="161.02" width="6.12" height="12.02" fill="#19368f"/><rect x="495.60" y="172.64" width="6.12" height="12.02" fill="#1b40b4"/><rect x="495.60" y="184.26" width="6.12" height="12.02" fill="#1f52da"/><rect x="495.60" y="195.88" width="6.12" height="12.02" fill="#1468c4"/><rect x="495.60" y="207.50" width="6.12" height="12.02" fill="#1f52da"/><rect x="495.60" y="219.12" width="6.12" height="12.02" fill="#0d4c88"/><rect x="495.60" y="230.74" width="6.12" height="12.02" fill="#1f52da"/><rect x="495.60" y="242.36" width="6.12" height="12.02" fill="#1f52da"/><rect x="495.60" y="253.98" width="6.12" height="12.02" fill="#1b40b4"/><rect x="501.33" y="149.40" width="6.12" height="12.02" fill="#2f2fc8"/><rect x="501.33" y="161.02" width="6.12" height="12.02" fill="#0f5a9c"/><rect x="501.33" y="172.64" width="6.12" height="12.02" fill="#152c7a"/><rect x="501.33" y="184.26" width="6.12" height="12.02" fill="#1b40b4"/><rect x="501.33" y="195.88" width="6.12" height="12.02" fill="#1468c4"/><rect x="501.33" y="207.50" width="6.12" height="12.02" fill="#1f52da"/><rect x="501.33" y="219.12" width="6.12" height="12.02" fill="#1b40b4"/><rect x="501.33" y="230.74" width="6.12" height="12.02" fill="#1f52da"/><rect x="501.33" y="242.36" width="6.12" height="12.02" fill="#1f52da"/><rect x="501.33" y="253.98" width="6.12" height="12.02" fill="#19368f"/><rect x="507.05" y="149.40" width="6.12" height="12.02" fill="#1f52da"/><rect x="507.05" y="161.02" width="6.12" height="12.02" fill="#19368f"/><rect x="507.05" y="172.64" width="6.12" height="12.02" fill="#1f52da"/><rect x="507.05" y="184.26" width="6.12" height="12.02" fill="#3e6ee6"/><rect x="507.05" y="195.88" width="6.12" height="12.02" fill="#1f52da"/><rect x="507.05" y="207.50" width="6.12" height="12.02" fill="#0f5a9c"/><rect x="507.05" y="219.12" width="6.12" height="12.02" fill="#2a3fd0"/><rect x="507.05" y="230.74" width="6.12" height="12.02" fill="#1b40b4"/><rect x="507.05" y="242.36" width="6.12" height="12.02" fill="#1f52da"/><rect x="507.05" y="253.98" width="6.12" height="12.02" fill="#1b40b4"/><rect x="512.77" y="149.40" width="6.12" height="12.02" fill="#1468c4"/><rect x="512.77" y="161.02" width="6.12" height="12.02" fill="#1f52da"/><rect x="512.77" y="172.64" width="6.12" height="12.02" fill="#1f52da"/><rect x="512.77" y="184.26" width="6.12" height="12.02" fill="#1b40b4"/><rect x="512.77" y="195.88" width="6.12" height="12.02" fill="#0f5a9c"/><rect x="512.77" y="207.50" width="6.12" height="12.02" fill="#0f5a9c"/><rect x="512.77" y="219.12" width="6.12" height="12.02" fill="#0f5a9c"/><rect x="512.77" y="230.74" width="6.12" height="12.02" fill="#3e6ee6"/><rect x="512.77" y="242.36" width="6.12" height="12.02" fill="#1f52da"/><rect x="512.77" y="253.98" width="6.12" height="12.02" fill="#1e3aa2"/><rect x="518.50" y="149.40" width="6.12" height="12.02" fill="#0f5a9c"/><rect x="518.50" y="161.02" width="6.12" height="12.02" fill="#19368f"/><rect x="518.50" y="172.64" width="6.12" height="12.02" fill="#1f52da"/><rect x="518.50" y="184.26" width="6.12" height="12.02" fill="#1583e0"/><rect x="518.50" y="195.88" width="6.12" height="12.02" fill="#1f52da"/><rect x="518.50" y="207.50" width="6.12" height="12.02" fill="#1468c4"/><rect x="518.50" y="219.12" width="6.12" height="12.02" fill="#19368f"/><rect x="518.50" y="230.74" width="6.12" height="12.02" fill="#3e6ee6"/><rect x="518.50" y="242.36" width="6.12" height="12.02" fill="#1f52da"/><rect x="518.50" y="253.98" width="6.12" height="12.02" fill="#3e6ee6"/><rect x="524.23" y="149.40" width="6.12" height="12.02" fill="#3e6ee6"/><rect x="524.23" y="161.02" width="6.12" height="12.02" fill="#1f52da"/><rect x="524.23" y="172.64" width="6.12" height="12.02" fill="#19368f"/><rect x="524.23" y="184.26" width="6.12" height="12.02" fill="#0f5a9c"/><rect x="524.23" y="195.88" width="6.12" height="12.02" fill="#3e6ee6"/><rect x="524.23" y="207.50" width="6.12" height="12.02" fill="#1b40b4"/><rect x="524.23" y="219.12" width="6.12" height="12.02" fill="#19368f"/><rect x="524.23" y="230.74" width="6.12" height="12.02" fill="#1468c4"/><rect x="524.23" y="242.36" width="6.12" height="12.02" fill="#1468c4"/><rect x="524.23" y="253.98" width="6.12" height="12.02" fill="#19368f"/><rect x="529.95" y="149.40" width="6.12" height="12.02" fill="#3e6ee6"/><rect x="529.95" y="161.02" width="6.12" height="12.02" fill="#1b40b4"/><rect x="529.95" y="172.64" width="6.12" height="12.02" fill="#1f52da"/><rect x="529.95" y="184.26" width="6.12" height="12.02" fill="#2f2fc8"/><rect x="529.95" y="195.88" width="6.12" height="12.02" fill="#1f52da"/><rect x="529.95" y="207.50" width="6.12" height="12.02" fill="#1b40b4"/><rect x="529.95" y="219.12" width="6.12" height="12.02" fill="#2a3fd0"/><rect x="529.95" y="230.74" width="6.12" height="12.02" fill="#1f52da"/><rect x="529.95" y="242.36" width="6.12" height="12.02" fill="#19368f"/><rect x="529.95" y="253.98" width="6.12" height="12.02" fill="#1f52da"/><rect x="535.67" y="149.40" width="6.12" height="12.02" fill="#1b40b4"/><rect x="535.67" y="161.02" width="6.12" height="12.02" fill="#1468c4"/><rect x="535.67" y="172.64" width="6.12" height="12.02" fill="#2626bc"/><rect x="535.67" y="184.26" width="6.12" height="12.02" fill="#1f52da"/><rect x="535.67" y="195.88" width="6.12" height="12.02" fill="#3e6ee6"/><rect x="535.67" y="207.50" width="6.12" height="12.02" fill="#1f52da"/><rect x="535.67" y="219.12" width="6.12" height="12.02" fill="#1f52da"/><rect x="535.67" y="230.74" width="6.12" height="12.02" fill="#3e6ee6"/><rect x="535.67" y="242.36" width="6.12" height="12.02" fill="#0f5a9c"/><rect x="535.67" y="253.98" width="6.12" height="12.02" fill="#1b40b4"/><rect x="541.40" y="149.40" width="6.12" height="12.02" fill="#1468c4"/><rect x="541.40" y="161.02" width="6.12" height="12.02" fill="#1f52da"/><rect x="541.40" y="172.64" width="6.12" height="12.02" fill="#2a3fd0"/><rect x="541.40" y="184.26" width="6.12" height="12.02" fill="#1f52da"/><rect x="541.40" y="195.88" width="6.12" height="12.02" fill="#2b2fc4"/><rect x="541.40" y="207.50" width="6.12" height="12.02" fill="#1b40b4"/><rect x="541.40" y="219.12" width="6.12" height="12.02" fill="#0f5a9c"/><rect x="541.40" y="230.74" width="6.12" height="12.02" fill="#2f2fc8"/><rect x="541.40" y="242.36" width="6.12" height="12.02" fill="#1f52da"/><rect x="541.40" y="253.98" width="6.12" height="12.02" fill="#3a2a94"/><rect x="547.12" y="149.40" width="6.12" height="12.02" fill="#1468c4"/><rect x="547.12" y="161.02" width="6.12" height="12.02" fill="#0d4c88"/><rect x="547.12" y="172.64" width="6.12" height="12.02" fill="#1f52da"/><rect x="547.12" y="184.26" width="6.12" height="12.02" fill="#1f52da"/><rect x="547.12" y="195.88" width="6.12" height="12.02" fill="#0f5a9c"/><rect x="547.12" y="207.50" width="6.12" height="12.02" fill="#2f2fc8"/><rect x="547.12" y="219.12" width="6.12" height="12.02" fill="#0f5a9c"/><rect x="547.12" y="230.74" width="6.12" height="12.02" fill="#3e6ee6"/><rect x="547.12" y="242.36" width="6.12" height="12.02" fill="#1d4fb8"/><rect x="547.12" y="253.98" width="6.12" height="12.02" fill="#1468c4"/><rect x="552.85" y="149.40" width="6.12" height="12.02" fill="#1e1e8e"/><rect x="552.85" y="161.02" width="6.12" height="12.02" fill="#1f52da"/><rect x="552.85" y="172.64" width="6.12" height="12.02" fill="#1b40b4"/><rect x="552.85" y="184.26" width="6.12" height="12.02" fill="#0f5a9c"/><rect x="552.85" y="195.88" width="6.12" height="12.02" fill="#1f52da"/><rect x="552.85" y="207.50" width="6.12" height="12.02" fill="#1b40b4"/><rect x="552.85" y="219.12" width="6.12" height="12.02" fill="#1f52da"/><rect x="552.85" y="230.74" width="6.12" height="12.02" fill="#1f52da"/><rect x="552.85" y="242.36" width="6.12" height="12.02" fill="#0f5a9c"/><rect x="552.85" y="253.98" width="6.12" height="12.02" fill="#1468c4"/><rect x="558.57" y="149.40" width="6.12" height="12.02" fill="#1f52da"/><rect x="558.57" y="161.02" width="6.12" height="12.02" fill="#1e1e8e"/><rect x="558.57" y="172.64" width="6.12" height="12.02" fill="#3e6ee6"/><rect x="558.57" y="184.26" width="6.12" height="12.02" fill="#19368f"/><rect x="558.57" y="195.88" width="6.12" height="12.02" fill="#2e34cc"/><rect x="558.57" y="207.50" width="6.12" height="12.02" fill="#2a3fd0"/><rect x="558.57" y="219.12" width="6.12" height="12.02" fill="#19368f"/><rect x="558.57" y="230.74" width="6.12" height="12.02" fill="#2e34cc"/><rect x="558.57" y="242.36" width="6.12" height="12.02" fill="#1f52da"/><rect x="558.57" y="253.98" width="6.12" height="12.02" fill="#1b40b4"/><rect x="564.30" y="149.40" width="6.13" height="12.02" fill="#3a30c8"/><rect x="564.30" y="161.02" width="6.13" height="12.02" fill="#1f52da"/><rect x="564.30" y="172.64" width="6.13" height="12.02" fill="#1f52da"/><rect x="564.30" y="184.26" width="6.13" height="12.02" fill="#0f5a9c"/><rect x="564.30" y="195.88" width="6.13" height="12.02" fill="#1f52da"/><rect x="564.30" y="207.50" width="6.13" height="12.02" fill="#19368f"/><rect x="564.30" y="219.12" width="6.13" height="12.02" fill="#1f52da"/><rect x="564.30" y="230.74" width="6.13" height="12.02" fill="#1f52da"/><rect x="564.30" y="242.36" width="6.13" height="12.02" fill="#0f5a9c"/><rect x="564.30" y="253.98" width="6.13" height="12.02" fill="#1f52da"/><rect x="570.02" y="149.40" width="6.13" height="12.02" fill="#1f52da"/><rect x="570.02" y="161.02" width="6.13" height="12.02" fill="#2626bc"/><rect x="570.02" y="172.64" width="6.13" height="12.02" fill="#3e6ee6"/><rect x="570.02" y="184.26" width="6.13" height="12.02" fill="#1b40b4"/><rect x="570.02" y="195.88" width="6.13" height="12.02" fill="#0d4c88"/><rect x="570.02" y="207.50" width="6.13" height="12.02" fill="#1e1e8e"/><rect x="570.02" y="219.12" width="6.13" height="12.02" fill="#2626bc"/><rect x="570.02" y="230.74" width="6.13" height="12.02" fill="#1f52da"/><rect x="570.02" y="242.36" width="6.13" height="12.02" fill="#1b40b4"/><rect x="570.02" y="253.98" width="6.13" height="12.02" fill="#19368f"/><rect x="575.75" y="149.40" width="6.13" height="12.02" fill="#1468c4"/><rect x="575.75" y="161.02" width="6.13" height="12.02" fill="#1f52da"/><rect x="575.75" y="172.64" width="6.13" height="12.02" fill="#1f52da"/><rect x="575.75" y="184.26" width="6.13" height="12.02" fill="#3e6ee6"/><rect x="575.75" y="195.88" width="6.13" height="12.02" fill="#1583e0"/><rect x="575.75" y="207.50" width="6.13" height="12.02" fill="#0d4c88"/><rect x="575.75" y="219.12" width="6.13" height="12.02" fill="#2e34cc"/><rect x="575.75" y="230.74" width="6.13" height="12.02" fill="#19368f"/><rect x="575.75" y="242.36" width="6.13" height="12.02" fill="#2e34cc"/><rect x="575.75" y="253.98" width="6.13" height="12.02" fill="#1583e0"/><rect x="581.48" y="149.40" width="6.13" height="12.02" fill="#0d4c88"/><rect x="581.48" y="161.02" width="6.13" height="12.02" fill="#2424a4"/><rect x="581.48" y="172.64" width="6.13" height="12.02" fill="#0f5a9c"/><rect x="581.48" y="184.26" width="6.13" height="12.02" fill="#1b40b4"/><rect x="581.48" y="195.88" width="6.13" height="12.02" fill="#2424a4"/><rect x="581.48" y="207.50" width="6.13" height="12.02" fill="#0f5a9c"/><rect x="581.48" y="219.12" width="6.13" height="12.02" fill="#1468c4"/><rect x="581.48" y="230.74" width="6.13" height="12.02" fill="#2b2fc4"/><rect x="581.48" y="242.36" width="6.13" height="12.02" fill="#1f52da"/><rect x="581.48" y="253.98" width="6.13" height="12.02" fill="#1e1e8e"/><rect x="587.20" y="149.40" width="6.20" height="12.02" fill="#3e6ee6"/><rect x="587.20" y="161.02" width="6.20" height="12.02" fill="#152c7a"/><rect x="587.20" y="172.64" width="6.20" height="12.02" fill="#1b40b4"/><rect x="587.20" y="184.26" width="6.20" height="12.02" fill="#3a30c8"/><rect x="587.20" y="195.88" width="6.20" height="12.02" fill="#2b2fc4"/><rect x="587.20" y="207.50" width="6.20" height="12.02" fill="#0f5a9c"/><rect x="587.20" y="219.12" width="6.20" height="12.02" fill="#1f52da"/><rect x="587.20" y="230.74" width="6.20" height="12.02" fill="#2f2fc8"/><rect x="587.20" y="242.36" width="6.20" height="12.02" fill="#0d4c88"/><rect x="587.20" y="253.98" width="6.20" height="12.02" fill="#1d4fb8"/><rect x="593.00" y="149.40" width="6.20" height="12.02" fill="#2b2fc4"/><rect x="593.00" y="161.02" width="6.20" height="12.02" fill="#1e3aa2"/><rect x="593.00" y="172.64" width="6.20" height="12.02" fill="#1f52da"/><rect x="593.00" y="184.26" width="6.20" height="12.02" fill="#1f52da"/><rect x="593.00" y="195.88" width="6.20" height="12.02" fill="#2626bc"/><rect x="593.00" y="207.50" width="6.20" height="12.02" fill="#2a3fd0"/><rect x="593.00" y="219.12" width="6.20" height="12.02" fill="#1f52da"/><rect x="593.00" y="230.74" width="6.20" height="12.02" fill="#3e6ee6"/><rect x="593.00" y="242.36" width="6.20" height="12.02" fill="#0d4c88"/><rect x="593.00" y="253.98" width="6.20" height="12.02" fill="#1f52da"/><rect x="598.80" y="149.40" width="6.20" height="12.02" fill="#3a2a94"/><rect x="598.80" y="161.02" width="6.20" height="12.02" fill="#2e34cc"/><rect x="598.80" y="172.64" width="6.20" height="12.02" fill="#1f52da"/><rect x="598.80" y="184.26" width="6.20" height="12.02" fill="#1f52da"/><rect x="598.80" y="195.88" width="6.20" height="12.02" fill="#1f52da"/><rect x="598.80" y="207.50" width="6.20" height="12.02" fill="#1f52da"/><rect x="598.80" y="219.12" width="6.20" height="12.02" fill="#1f52da"/><rect x="598.80" y="230.74" width="6.20" height="12.02" fill="#0d4c88"/><rect x="598.80" y="242.36" width="6.20" height="12.02" fill="#1b40b4"/><rect x="598.80" y="253.98" width="6.20" height="12.02" fill="#19368f"/><rect x="604.60" y="149.40" width="6.12" height="12.02" fill="#3e6ee6"/><rect x="604.60" y="161.02" width="6.12" height="12.02" fill="#2f2fc8"/><rect x="604.60" y="172.64" width="6.12" height="12.02" fill="#1468c4"/><rect x="604.60" y="184.26" width="6.12" height="12.02" fill="#1b40b4"/><rect x="604.60" y="195.88" width="6.12" height="12.02" fill="#1468c4"/><rect x="604.60" y="207.50" width="6.12" height="12.02" fill="#0f5a9c"/><rect x="604.60" y="219.12" width="6.12" height="12.02" fill="#1468c4"/><rect x="604.60" y="230.74" width="6.12" height="12.02" fill="#2626bc"/><rect x="604.60" y="242.36" width="6.12" height="12.02" fill="#1468c4"/><rect x="604.60" y="253.98" width="6.12" height="12.02" fill="#0d4c88"/><rect x="610.33" y="149.40" width="6.12" height="12.02" fill="#1f52da"/><rect x="610.33" y="161.02" width="6.12" height="12.02" fill="#1f52da"/><rect x="610.33" y="172.64" width="6.12" height="12.02" fill="#2e34cc"/><rect x="610.33" y="184.26" width="6.12" height="12.02" fill="#1b40b4"/><rect x="610.33" y="195.88" width="6.12" height="12.02" fill="#2424a4"/><rect x="610.33" y="207.50" width="6.12" height="12.02" fill="#1f52da"/><rect x="610.33" y="219.12" width="6.12" height="12.02" fill="#2e34cc"/><rect x="610.33" y="230.74" width="6.12" height="12.02" fill="#2626bc"/><rect x="610.33" y="242.36" width="6.12" height="12.02" fill="#2a3fd0"/><rect x="610.33" y="253.98" width="6.12" height="12.02" fill="#1468c4"/><rect x="616.05" y="149.40" width="6.12" height="12.02" fill="#2424a4"/><rect x="616.05" y="161.02" width="6.12" height="12.02" fill="#2424a4"/><rect x="616.05" y="172.64" width="6.12" height="12.02" fill="#1468c4"/><rect x="616.05" y="184.26" width="6.12" height="12.02" fill="#2424a4"/><rect x="616.05" y="195.88" width="6.12" height="12.02" fill="#1e3aa2"/><rect x="616.05" y="207.50" width="6.12" height="12.02" fill="#1f52da"/><rect x="616.05" y="219.12" width="6.12" height="12.02" fill="#1e1e8e"/><rect x="616.05" y="230.74" width="6.12" height="12.02" fill="#2626bc"/><rect x="616.05" y="242.36" width="6.12" height="12.02" fill="#1468c4"/><rect x="616.05" y="253.98" width="6.12" height="12.02" fill="#2e34cc"/><rect x="621.77" y="149.40" width="6.12" height="12.02" fill="#1f52da"/><rect x="621.77" y="161.02" width="6.12" height="12.02" fill="#2b2fc4"/><rect x="621.77" y="172.64" width="6.12" height="12.02" fill="#3a2a94"/><rect x="621.77" y="184.26" width="6.12" height="12.02" fill="#2a3fd0"/><rect x="621.77" y="195.88" width="6.12" height="12.02" fill="#2626bc"/><rect x="621.77" y="207.50" width="6.12" height="12.02" fill="#2b2fc4"/><rect x="621.77" y="219.12" width="6.12" height="12.02" fill="#1f52da"/><rect x="621.77" y="230.74" width="6.12" height="12.02" fill="#1f52da"/><rect x="621.77" y="242.36" width="6.12" height="12.02" fill="#2626bc"/><rect x="621.77" y="253.98" width="6.12" height="12.02" fill="#2f2fc8"/><rect x="627.50" y="149.40" width="6.30" height="12.02" fill="#17207a"/><rect x="627.50" y="161.02" width="6.30" height="12.02" fill="#2b2fc4"/><rect x="627.50" y="172.64" width="6.30" height="12.02" fill="#2626bc"/><rect x="627.50" y="184.26" width="6.30" height="12.02" fill="#1f52da"/><rect x="627.50" y="195.88" width="6.30" height="12.02" fill="#1468c4"/><rect x="627.50" y="207.50" width="6.30" height="12.02" fill="#1f52da"/><rect x="627.50" y="219.12" width="6.30" height="12.02" fill="#2a3fd0"/><rect x="627.50" y="230.74" width="6.30" height="12.02" fill="#2626bc"/><rect x="627.50" y="242.36" width="6.30" height="12.02" fill="#1e1e8e"/><rect x="627.50" y="253.98" width="6.30" height="12.02" fill="#1f52da"/><rect x="633.40" y="149.40" width="6.30" height="12.02" fill="#1e1e8e"/><rect x="633.40" y="161.02" width="6.30" height="12.02" fill="#1583e0"/><rect x="633.40" y="172.64" width="6.30" height="12.02" fill="#17207a"/><rect x="633.40" y="184.26" width="6.30" height="12.02" fill="#0d4c88"/><rect x="633.40" y="195.88" width="6.30" height="12.02" fill="#1e1e8e"/><rect x="633.40" y="207.50" width="6.30" height="12.02" fill="#19368f"/><rect x="633.40" y="219.12" width="6.30" height="12.02" fill="#17207a"/><rect x="633.40" y="230.74" width="6.30" height="12.02" fill="#3a30c8"/><rect x="633.40" y="242.36" width="6.30" height="12.02" fill="#1e3aa2"/><rect x="633.40" y="253.98" width="6.30" height="12.02" fill="#2626bc"/><rect x="639.30" y="149.40" width="6.30" height="12.02" fill="#1e1e8e"/><rect x="639.30" y="161.02" width="6.30" height="12.02" fill="#2424a4"/><rect x="639.30" y="172.64" width="6.30" height="12.02" fill="#1e1e8e"/><rect x="639.30" y="184.26" width="6.30" height="12.02" fill="#1f52da"/><rect x="639.30" y="195.88" width="6.30" height="12.02" fill="#1e3aa2"/><rect x="639.30" y="207.50" width="6.30" height="12.02" fill="#2b2fc4"/><rect x="639.30" y="219.12" width="6.30" height="12.02" fill="#1f52da"/><rect x="639.30" y="230.74" width="6.30" height="12.02" fill="#2424a4"/><rect x="639.30" y="242.36" width="6.30" height="12.02" fill="#2b2fc4"/><rect x="639.30" y="253.98" width="6.30" height="12.02" fill="#2626bc"/><rect x="645.20" y="149.40" width="6.30" height="12.02" fill="#17207a"/><rect x="645.20" y="161.02" width="6.30" height="12.02" fill="#17207a"/><rect x="645.20" y="172.64" width="6.30" height="12.02" fill="#0f5a9c"/><rect x="645.20" y="184.26" width="6.30" height="12.02" fill="#1d4fb8"/><rect x="645.20" y="195.88" width="6.30" height="12.02" fill="#1e3aa2"/><rect x="645.20" y="207.50" width="6.30" height="12.02" fill="#1f52da"/><rect x="645.20" y="219.12" width="6.30" height="12.02" fill="#1f52da"/><rect x="645.20" y="230.74" width="6.30" height="12.02" fill="#1e1e8e"/><rect x="645.20" y="242.36" width="6.30" height="12.02" fill="#2424a4"/><rect x="645.20" y="253.98" width="6.30" height="12.02" fill="#1583e0"/><rect x="651.10" y="149.40" width="5.95" height="12.02" fill="#3a2a94"/><rect x="651.10" y="161.02" width="5.95" height="12.02" fill="#3b44d8"/><rect x="651.10" y="172.64" width="5.95" height="12.02" fill="#2626bc"/><rect x="651.10" y="184.26" width="5.95" height="12.02" fill="#2424a4"/><rect x="651.10" y="195.88" width="5.95" height="12.02" fill="#2b2fc4"/><rect x="651.10" y="207.50" width="5.95" height="12.02" fill="#2626bc"/><rect x="651.10" y="219.12" width="5.95" height="12.02" fill="#3a2a94"/><rect x="651.10" y="230.74" width="5.95" height="12.02" fill="#2e34cc"/><rect x="651.10" y="242.36" width="5.95" height="12.02" fill="#2424a4"/><rect x="651.10" y="253.98" width="5.95" height="12.02" fill="#2b2fc4"/><rect x="656.65" y="149.40" width="5.95" height="12.02" fill="#1e3aa2"/><rect x="656.65" y="161.02" width="5.95" height="12.02" fill="#1e1e8e"/><rect x="656.65" y="172.64" width="5.95" height="12.02" fill="#1e1e8e"/><rect x="656.65" y="184.26" width="5.95" height="12.02" fill="#1e1e8e"/><rect x="656.65" y="195.88" width="5.95" height="12.02" fill="#1e3aa2"/><rect x="656.65" y="207.50" width="5.95" height="12.02" fill="#3b44d8"/><rect x="656.65" y="219.12" width="5.95" height="12.02" fill="#1d4fb8"/><rect x="656.65" y="230.74" width="5.95" height="12.02" fill="#1e1e8e"/><rect x="656.65" y="242.36" width="5.95" height="12.02" fill="#2424a4"/><rect x="656.65" y="253.98" width="5.95" height="12.02" fill="#1583e0"/><rect x="662.20" y="149.40" width="5.95" height="12.02" fill="#2e34cc"/><rect x="662.20" y="161.02" width="5.95" height="12.02" fill="#2626bc"/><rect x="662.20" y="172.64" width="5.95" height="12.02" fill="#1f52da"/><rect x="662.20" y="184.26" width="5.95" height="12.02" fill="#2424a4"/><rect x="662.20" y="195.88" width="5.95" height="12.02" fill="#1f52da"/><rect x="662.20" y="207.50" width="5.95" height="12.02" fill="#2424a4"/><rect x="662.20" y="219.12" width="5.95" height="12.02" fill="#1e1e8e"/><rect x="662.20" y="230.74" width="5.95" height="12.02" fill="#1f52da"/><rect x="662.20" y="242.36" width="5.95" height="12.02" fill="#1e1e8e"/><rect x="662.20" y="253.98" width="5.95" height="12.02" fill="#2626bc"/><rect x="667.75" y="149.40" width="5.95" height="12.02" fill="#3a30c8"/><rect x="667.75" y="161.02" width="5.95" height="12.02" fill="#2424a4"/><rect x="667.75" y="172.64" width="5.95" height="12.02" fill="#1e1e8e"/><rect x="667.75" y="184.26" width="5.95" height="12.02" fill="#1e1e8e"/><rect x="667.75" y="195.88" width="5.95" height="12.02" fill="#2b2fc4"/><rect x="667.75" y="207.50" width="5.95" height="12.02" fill="#2e34cc"/><rect x="667.75" y="219.12" width="5.95" height="12.02" fill="#0d4c88"/><rect x="667.75" y="230.74" width="5.95" height="12.02" fill="#2e34cc"/><rect x="667.75" y="242.36" width="5.95" height="12.02" fill="#2626bc"/><rect x="667.75" y="253.98" width="5.95" height="12.02" fill="#2424a4"/><rect x="673.30" y="149.40" width="6.20" height="12.02" fill="#3b44d8"/><rect x="673.30" y="161.02" width="6.20" height="12.02" fill="#3a2a94"/><rect x="673.30" y="172.64" width="6.20" height="12.02" fill="#1d4fb8"/><rect x="673.30" y="184.26" width="6.20" height="12.02" fill="#2424a4"/><rect x="673.30" y="195.88" width="6.20" height="12.02" fill="#2e34cc"/><rect x="673.30" y="207.50" width="6.20" height="12.02" fill="#1e3aa2"/><rect x="673.30" y="219.12" width="6.20" height="12.02" fill="#2626bc"/><rect x="673.30" y="230.74" width="6.20" height="12.02" fill="#3a2a94"/><rect x="673.30" y="242.36" width="6.20" height="12.02" fill="#2e34cc"/><rect x="673.30" y="253.98" width="6.20" height="12.02" fill="#19368f"/><rect x="679.10" y="149.40" width="6.20" height="12.02" fill="#2626bc"/><rect x="679.10" y="161.02" width="6.20" height="12.02" fill="#2626bc"/><rect x="679.10" y="172.64" width="6.20" height="12.02" fill="#2e34cc"/><rect x="679.10" y="184.26" width="6.20" height="12.02" fill="#2626bc"/><rect x="679.10" y="195.88" width="6.20" height="12.02" fill="#1e1e8e"/><rect x="679.10" y="207.50" width="6.20" height="12.02" fill="#2b2fc4"/><rect x="679.10" y="219.12" width="6.20" height="12.02" fill="#1e1e8e"/><rect x="679.10" y="230.74" width="6.20" height="12.02" fill="#2626bc"/><rect x="679.10" y="242.36" width="6.20" height="12.02" fill="#1f52da"/><rect x="679.10" y="253.98" width="6.20" height="12.02" fill="#2424a4"/><rect x="684.90" y="149.40" width="6.20" height="12.02" fill="#2626bc"/><rect x="684.90" y="161.02" width="6.20" height="12.02" fill="#2e34cc"/><rect x="684.90" y="172.64" width="6.20" height="12.02" fill="#2b2fc4"/><rect x="684.90" y="184.26" width="6.20" height="12.02" fill="#2424a4"/><rect x="684.90" y="195.88" width="6.20" height="12.02" fill="#2626bc"/><rect x="684.90" y="207.50" width="6.20" height="12.02" fill="#1e1e8e"/><rect x="684.90" y="219.12" width="6.20" height="12.02" fill="#2626bc"/><rect x="684.90" y="230.74" width="6.20" height="12.02" fill="#2626bc"/><rect x="684.90" y="242.36" width="6.20" height="12.02" fill="#2e34cc"/><rect x="684.90" y="253.98" width="6.20" height="12.02" fill="#2626bc"/><rect x="690.70" y="149.40" width="6.20" height="12.02" fill="#1e1e8e"/><rect x="690.70" y="161.02" width="6.20" height="12.02" fill="#17207a"/><rect x="690.70" y="172.64" width="6.20" height="12.02" fill="#2626bc"/><rect x="690.70" y="184.26" width="6.20" height="12.02" fill="#2424a4"/><rect x="690.70" y="195.88" width="6.20" height="12.02" fill="#2e34cc"/><rect x="690.70" y="207.50" width="6.20" height="12.02" fill="#1e1e8e"/><rect x="690.70" y="219.12" width="6.20" height="12.02" fill="#2e34cc"/><rect x="690.70" y="230.74" width="6.20" height="12.02" fill="#2626bc"/><rect x="690.70" y="242.36" width="6.20" height="12.02" fill="#3b44d8"/><rect x="690.70" y="253.98" width="6.20" height="12.02" fill="#2424a4"/><rect x="696.50" y="149.40" width="6.18" height="12.02" fill="#1f52da"/><rect x="696.50" y="161.02" width="6.18" height="12.02" fill="#2b2fc4"/><rect x="696.50" y="172.64" width="6.18" height="12.02" fill="#2424a4"/><rect x="696.50" y="184.26" width="6.18" height="12.02" fill="#2b2fc4"/><rect x="696.50" y="195.88" width="6.18" height="12.02" fill="#1e1e8e"/><rect x="696.50" y="207.50" width="6.18" height="12.02" fill="#2626bc"/><rect x="696.50" y="219.12" width="6.18" height="12.02" fill="#2e34cc"/><rect x="696.50" y="230.74" width="6.18" height="12.02" fill="#2e34cc"/><rect x="696.50" y="242.36" width="6.18" height="12.02" fill="#3a2a94"/><rect x="696.50" y="253.98" width="6.18" height="12.02" fill="#2626bc"/><rect x="702.27" y="149.40" width="6.18" height="12.02" fill="#3a2a94"/><rect x="702.27" y="161.02" width="6.18" height="12.02" fill="#17207a"/><rect x="702.27" y="172.64" width="6.18" height="12.02" fill="#2626bc"/><rect x="702.27" y="184.26" width="6.18" height="12.02" fill="#2e34cc"/><rect x="702.27" y="195.88" width="6.18" height="12.02" fill="#3b44d8"/><rect x="702.27" y="207.50" width="6.18" height="12.02" fill="#1e3aa2"/><rect x="702.27" y="219.12" width="6.18" height="12.02" fill="#2626bc"/><rect x="702.27" y="230.74" width="6.18" height="12.02" fill="#2e34cc"/><rect x="702.27" y="242.36" width="6.18" height="12.02" fill="#2e34cc"/><rect x="702.27" y="253.98" width="6.18" height="12.02" fill="#3a2a94"/><rect x="708.05" y="149.40" width="6.18" height="12.02" fill="#3a2a94"/><rect x="708.05" y="161.02" width="6.18" height="12.02" fill="#1e1e8e"/><rect x="708.05" y="172.64" width="6.18" height="12.02" fill="#2e34cc"/><rect x="708.05" y="184.26" width="6.18" height="12.02" fill="#1e3aa2"/><rect x="708.05" y="195.88" width="6.18" height="12.02" fill="#17207a"/><rect x="708.05" y="207.50" width="6.18" height="12.02" fill="#3a2a94"/><rect x="708.05" y="219.12" width="6.18" height="12.02" fill="#2b2fc4"/><rect x="708.05" y="230.74" width="6.18" height="12.02" fill="#1e3aa2"/><rect x="708.05" y="242.36" width="6.18" height="12.02" fill="#2424a4"/><rect x="708.05" y="253.98" width="6.18" height="12.02" fill="#3b44d8"/><rect x="713.83" y="149.40" width="6.18" height="12.02" fill="#2e34cc"/><rect x="713.83" y="161.02" width="6.18" height="12.02" fill="#1d4fb8"/><rect x="713.83" y="172.64" width="6.18" height="12.02" fill="#2e34cc"/><rect x="713.83" y="184.26" width="6.18" height="12.02" fill="#2626bc"/><rect x="713.83" y="195.88" width="6.18" height="12.02" fill="#3a2a94"/><rect x="713.83" y="207.50" width="6.18" height="12.02" fill="#2e34cc"/><rect x="713.83" y="219.12" width="6.18" height="12.02" fill="#1f52da"/><rect x="713.83" y="230.74" width="6.18" height="12.02" fill="#1e1e8e"/><rect x="713.83" y="242.36" width="6.18" height="12.02" fill="#1e1e8e"/><rect x="713.83" y="253.98" width="6.18" height="12.02" fill="#1e3aa2"/><rect x="719.60" y="149.40" width="6.27" height="12.02" fill="#1e1e8e"/><rect x="719.60" y="161.02" width="6.27" height="12.02" fill="#17207a"/><rect x="719.60" y="172.64" width="6.27" height="12.02" fill="#3b44d8"/><rect x="719.60" y="184.26" width="6.27" height="12.02" fill="#1d4fb8"/><rect x="719.60" y="195.88" width="6.27" height="12.02" fill="#2e34cc"/><rect x="719.60" y="207.50" width="6.27" height="12.02" fill="#2b2fc4"/><rect x="719.60" y="219.12" width="6.27" height="12.02" fill="#2424a4"/><rect x="719.60" y="230.74" width="6.27" height="12.02" fill="#2424a4"/><rect x="719.60" y="242.36" width="6.27" height="12.02" fill="#1d4fb8"/><rect x="719.60" y="253.98" width="6.27" height="12.02" fill="#3b44d8"/><rect x="725.47" y="149.40" width="6.27" height="12.02" fill="#1e3aa2"/><rect x="725.47" y="161.02" width="6.27" height="12.02" fill="#1e1e8e"/><rect x="725.47" y="172.64" width="6.27" height="12.02" fill="#1e3aa2"/><rect x="725.47" y="184.26" width="6.27" height="12.02" fill="#1e1e8e"/><rect x="725.47" y="195.88" width="6.27" height="12.02" fill="#2626bc"/><rect x="725.47" y="207.50" width="6.27" height="12.02" fill="#2626bc"/><rect x="725.47" y="219.12" width="6.27" height="12.02" fill="#2626bc"/><rect x="725.47" y="230.74" width="6.27" height="12.02" fill="#2424a4"/><rect x="725.47" y="242.36" width="6.27" height="12.02" fill="#2e34cc"/><rect x="725.47" y="253.98" width="6.27" height="12.02" fill="#3a2a94"/><rect x="731.33" y="149.40" width="6.27" height="12.02" fill="#2b2fc4"/><rect x="731.33" y="161.02" width="6.27" height="12.02" fill="#2626bc"/><rect x="731.33" y="172.64" width="6.27" height="12.02" fill="#3a2a94"/><rect x="731.33" y="184.26" width="6.27" height="12.02" fill="#2e34cc"/><rect x="731.33" y="195.88" width="6.27" height="12.02" fill="#1e1e8e"/><rect x="731.33" y="207.50" width="6.27" height="12.02" fill="#2e34cc"/><rect x="731.33" y="219.12" width="6.27" height="12.02" fill="#2424a4"/><rect x="731.33" y="230.74" width="6.27" height="12.02" fill="#1d4fb8"/><rect x="731.33" y="242.36" width="6.27" height="12.02" fill="#2e34cc"/><rect x="731.33" y="253.98" width="6.27" height="12.02" fill="#3b44d8"/><rect x="737.20" y="149.40" width="6.20" height="12.02" fill="#2424a4"/><rect x="737.20" y="161.02" width="6.20" height="12.02" fill="#2e34cc"/><rect x="737.20" y="172.64" width="6.20" height="12.02" fill="#1e1e8e"/><rect x="737.20" y="184.26" width="6.20" height="12.02" fill="#2626bc"/><rect x="737.20" y="195.88" width="6.20" height="12.02" fill="#2b2fc4"/><rect x="737.20" y="207.50" width="6.20" height="12.02" fill="#2626bc"/><rect x="737.20" y="219.12" width="6.20" height="12.02" fill="#2e34cc"/><rect x="737.20" y="230.74" width="6.20" height="12.02" fill="#2e34cc"/><rect x="737.20" y="242.36" width="6.20" height="12.02" fill="#3a30c8"/><rect x="737.20" y="253.98" width="6.20" height="12.02" fill="#2424a4"/><rect x="743.00" y="149.40" width="6.20" height="12.02" fill="#2626bc"/><rect x="743.00" y="161.02" width="6.20" height="12.02" fill="#2424a4"/><rect x="743.00" y="172.64" width="6.20" height="12.02" fill="#1f52da"/><rect x="743.00" y="184.26" width="6.20" height="12.02" fill="#2626bc"/><rect x="743.00" y="195.88" width="6.20" height="12.02" fill="#3a2a94"/><rect x="743.00" y="207.50" width="6.20" height="12.02" fill="#1e1e8e"/><rect x="743.00" y="219.12" width="6.20" height="12.02" fill="#1d4fb8"/><rect x="743.00" y="230.74" width="6.20" height="12.02" fill="#2e34cc"/><rect x="743.00" y="242.36" width="6.20" height="12.02" fill="#2424a4"/><rect x="743.00" y="253.98" width="6.20" height="12.02" fill="#2e34cc"/><rect x="748.80" y="149.40" width="6.20" height="12.02" fill="#1e3aa2"/><rect x="748.80" y="161.02" width="6.20" height="12.02" fill="#2626bc"/><rect x="748.80" y="172.64" width="6.20" height="12.02" fill="#2626bc"/><rect x="748.80" y="184.26" width="6.20" height="12.02" fill="#1e1e8e"/><rect x="748.80" y="195.88" width="6.20" height="12.02" fill="#2626bc"/><rect x="748.80" y="207.50" width="6.20" height="12.02" fill="#2626bc"/><rect x="748.80" y="219.12" width="6.20" height="12.02" fill="#2626bc"/><rect x="748.80" y="230.74" width="6.20" height="12.02" fill="#1e1e8e"/><rect x="748.80" y="242.36" width="6.20" height="12.02" fill="#3a2a94"/><rect x="748.80" y="253.98" width="6.20" height="12.02" fill="#1e1e8e"/><rect x="754.60" y="149.40" width="6.20" height="12.02" fill="#2626bc"/><rect x="754.60" y="161.02" width="6.20" height="12.02" fill="#1e1e8e"/><rect x="754.60" y="172.64" width="6.20" height="12.02" fill="#2626bc"/><rect x="754.60" y="184.26" width="6.20" height="12.02" fill="#3a30c8"/><rect x="754.60" y="195.88" width="6.20" height="12.02" fill="#2b2fc4"/><rect x="754.60" y="207.50" width="6.20" height="12.02" fill="#2e34cc"/><rect x="754.60" y="219.12" width="6.20" height="12.02" fill="#2e34cc"/><rect x="754.60" y="230.74" width="6.20" height="12.02" fill="#1e3aa2"/><rect x="754.60" y="242.36" width="6.20" height="12.02" fill="#3b44d8"/><rect x="754.60" y="253.98" width="6.20" height="12.02" fill="#2b2fc4"/><rect x="760.40" y="149.40" width="5.95" height="12.02" fill="#3a30c8"/><rect x="760.40" y="161.02" width="5.95" height="12.02" fill="#1d4fb8"/><rect x="760.40" y="172.64" width="5.95" height="12.02" fill="#2626bc"/><rect x="760.40" y="184.26" width="5.95" height="12.02" fill="#2626bc"/><rect x="760.40" y="195.88" width="5.95" height="12.02" fill="#2626bc"/><rect x="760.40" y="207.50" width="5.95" height="12.02" fill="#2424a4"/><rect x="760.40" y="219.12" width="5.95" height="12.02" fill="#1e3aa2"/><rect x="760.40" y="230.74" width="5.95" height="12.02" fill="#2626bc"/><rect x="760.40" y="242.36" width="5.95" height="12.02" fill="#2626bc"/><rect x="760.40" y="253.98" width="5.95" height="12.02" fill="#2424a4"/><rect x="765.95" y="149.40" width="5.95" height="12.02" fill="#2424a4"/><rect x="765.95" y="161.02" width="5.95" height="12.02" fill="#2424a4"/><rect x="765.95" y="172.64" width="5.95" height="12.02" fill="#2424a4"/><rect x="765.95" y="184.26" width="5.95" height="12.02" fill="#2626bc"/><rect x="765.95" y="195.88" width="5.95" height="12.02" fill="#2e34cc"/><rect x="765.95" y="207.50" width="5.95" height="12.02" fill="#1e1e8e"/><rect x="765.95" y="219.12" width="5.95" height="12.02" fill="#2626bc"/><rect x="765.95" y="230.74" width="5.95" height="12.02" fill="#1e1e8e"/><rect x="765.95" y="242.36" width="5.95" height="12.02" fill="#2e34cc"/><rect x="765.95" y="253.98" width="5.95" height="12.02" fill="#2424a4"/><rect x="771.50" y="149.40" width="5.95" height="12.02" fill="#17207a"/><rect x="771.50" y="161.02" width="5.95" height="12.02" fill="#1e1e8e"/><rect x="771.50" y="172.64" width="5.95" height="12.02" fill="#1e1e8e"/><rect x="771.50" y="184.26" width="5.95" height="12.02" fill="#2e34cc"/><rect x="771.50" y="195.88" width="5.95" height="12.02" fill="#2626bc"/><rect x="771.50" y="207.50" width="5.95" height="12.02" fill="#1e3aa2"/><rect x="771.50" y="219.12" width="5.95" height="12.02" fill="#2626bc"/><rect x="771.50" y="230.74" width="5.95" height="12.02" fill="#2626bc"/><rect x="771.50" y="242.36" width="5.95" height="12.02" fill="#2e34cc"/><rect x="771.50" y="253.98" width="5.95" height="12.02" fill="#3a2a94"/><rect x="777.05" y="149.40" width="5.95" height="12.02" fill="#1e1e8e"/><rect x="777.05" y="161.02" width="5.95" height="12.02" fill="#2b2fc4"/><rect x="777.05" y="172.64" width="5.95" height="12.02" fill="#2b2fc4"/><rect x="777.05" y="184.26" width="5.95" height="12.02" fill="#2424a4"/><rect x="777.05" y="195.88" width="5.95" height="12.02" fill="#3a30c8"/><rect x="777.05" y="207.50" width="5.95" height="12.02" fill="#2b2fc4"/><rect x="777.05" y="219.12" width="5.95" height="12.02" fill="#2e34cc"/><rect x="777.05" y="230.74" width="5.95" height="12.02" fill="#2626bc"/><rect x="777.05" y="242.36" width="5.95" height="12.02" fill="#2424a4"/><rect x="777.05" y="253.98" width="5.95" height="12.02" fill="#1e1e8e"/><rect x="782.60" y="149.40" width="5.95" height="12.02" fill="#2e34cc"/><rect x="782.60" y="161.02" width="5.95" height="12.02" fill="#2626bc"/><rect x="782.60" y="172.64" width="5.95" height="12.02" fill="#2e34cc"/><rect x="782.60" y="184.26" width="5.95" height="12.02" fill="#2626bc"/><rect x="782.60" y="195.88" width="5.95" height="12.02" fill="#2b2fc4"/><rect x="782.60" y="207.50" width="5.95" height="12.02" fill="#3b44d8"/><rect x="782.60" y="219.12" width="5.95" height="12.02" fill="#1e3aa2"/><rect x="782.60" y="230.74" width="5.95" height="12.02" fill="#1d4fb8"/><rect x="782.60" y="242.36" width="5.95" height="12.02" fill="#2e34cc"/><rect x="782.60" y="253.98" width="5.95" height="12.02" fill="#2e34cc"/><rect x="788.15" y="149.40" width="5.95" height="12.02" fill="#1e1e8e"/><rect x="788.15" y="161.02" width="5.95" height="12.02" fill="#1e3aa2"/><rect x="788.15" y="172.64" width="5.95" height="12.02" fill="#2626bc"/><rect x="788.15" y="184.26" width="5.95" height="12.02" fill="#2e34cc"/><rect x="788.15" y="195.88" width="5.95" height="12.02" fill="#3b44d8"/><rect x="788.15" y="207.50" width="5.95" height="12.02" fill="#2626bc"/><rect x="788.15" y="219.12" width="5.95" height="12.02" fill="#3a30c8"/><rect x="788.15" y="230.74" width="5.95" height="12.02" fill="#1e1e8e"/><rect x="788.15" y="242.36" width="5.95" height="12.02" fill="#3a30c8"/><rect x="788.15" y="253.98" width="5.95" height="12.02" fill="#2b2fc4"/><rect x="793.70" y="149.40" width="5.95" height="12.02" fill="#3a30c8"/><rect x="793.70" y="161.02" width="5.95" height="12.02" fill="#1e1e8e"/><rect x="793.70" y="172.64" width="5.95" height="12.02" fill="#17207a"/><rect x="793.70" y="184.26" width="5.95" height="12.02" fill="#1d4fb8"/><rect x="793.70" y="195.88" width="5.95" height="12.02" fill="#1e3aa2"/><rect x="793.70" y="207.50" width="5.95" height="12.02" fill="#2626bc"/><rect x="793.70" y="219.12" width="5.95" height="12.02" fill="#2424a4"/><rect x="793.70" y="230.74" width="5.95" height="12.02" fill="#2424a4"/><rect x="793.70" y="242.36" width="5.95" height="12.02" fill="#1e3aa2"/><rect x="793.70" y="253.98" width="5.95" height="12.02" fill="#2626bc"/><rect x="799.25" y="149.40" width="5.95" height="12.02" fill="#17207a"/><rect x="799.25" y="161.02" width="5.95" height="12.02" fill="#1e3aa2"/><rect x="799.25" y="172.64" width="5.95" height="12.02" fill="#3a2a94"/><rect x="799.25" y="184.26" width="5.95" height="12.02" fill="#2424a4"/><rect x="799.25" y="195.88" width="5.95" height="12.02" fill="#2424a4"/><rect x="799.25" y="207.50" width="5.95" height="12.02" fill="#2b2fc4"/><rect x="799.25" y="219.12" width="5.95" height="12.02" fill="#2626bc"/><rect x="799.25" y="230.74" width="5.95" height="12.02" fill="#2626bc"/><rect x="799.25" y="242.36" width="5.95" height="12.02" fill="#2e34cc"/><rect x="799.25" y="253.98" width="5.95" height="12.02" fill="#1d4fb8"/><rect x="804.80" y="149.40" width="6.55" height="12.02" fill="#2626bc"/><rect x="804.80" y="161.02" width="6.55" height="12.02" fill="#12497c"/><rect x="804.80" y="172.64" width="6.55" height="12.02" fill="#2b2fc4"/><rect x="804.80" y="184.26" width="6.55" height="12.02" fill="#3a30c8"/><rect x="804.80" y="195.88" width="6.55" height="12.02" fill="#3b44d8"/><rect x="804.80" y="207.50" width="6.55" height="12.02" fill="#2424a4"/><rect x="804.80" y="219.12" width="6.55" height="12.02" fill="#17207a"/><rect x="804.80" y="230.74" width="6.55" height="12.02" fill="#2626bc"/><rect x="804.80" y="242.36" width="6.55" height="12.02" fill="#1e1e8e"/><rect x="804.80" y="253.98" width="6.55" height="12.02" fill="#1e1e8e"/><rect x="810.95" y="149.40" width="6.55" height="12.02" fill="#2424a4"/><rect x="810.95" y="161.02" width="6.55" height="12.02" fill="#2626bc"/><rect x="810.95" y="172.64" width="6.55" height="12.02" fill="#3a2a94"/><rect x="810.95" y="184.26" width="6.55" height="12.02" fill="#2626bc"/><rect x="810.95" y="195.88" width="6.55" height="12.02" fill="#3b44d8"/><rect x="810.95" y="207.50" width="6.55" height="12.02" fill="#2626bc"/><rect x="810.95" y="219.12" width="6.55" height="12.02" fill="#2424a4"/><rect x="810.95" y="230.74" width="6.55" height="12.02" fill="#2e34cc"/><rect x="810.95" y="242.36" width="6.55" height="12.02" fill="#2e34cc"/><rect x="810.95" y="253.98" width="6.55" height="12.02" fill="#3b44d8"/><rect x="817.10" y="149.40" width="6.55" height="12.02" fill="#1d4fb8"/><rect x="817.10" y="161.02" width="6.55" height="12.02" fill="#2e34cc"/><rect x="817.10" y="172.64" width="6.55" height="12.02" fill="#2b2fc4"/><rect x="817.10" y="184.26" width="6.55" height="12.02" fill="#2424a4"/><rect x="817.10" y="195.88" width="6.55" height="12.02" fill="#3b44d8"/><rect x="817.10" y="207.50" width="6.55" height="12.02" fill="#2b2fc4"/><rect x="817.10" y="219.12" width="6.55" height="12.02" fill="#12497c"/><rect x="817.10" y="230.74" width="6.55" height="12.02" fill="#2e34cc"/><rect x="817.10" y="242.36" width="6.55" height="12.02" fill="#2e34cc"/><rect x="817.10" y="253.98" width="6.55" height="12.02" fill="#3b44d8"/><rect x="823.25" y="149.40" width="6.55" height="12.02" fill="#2626bc"/><rect x="823.25" y="161.02" width="6.55" height="12.02" fill="#1e1e8e"/><rect x="823.25" y="172.64" width="6.55" height="12.02" fill="#2b2fc4"/><rect x="823.25" y="184.26" width="6.55" height="12.02" fill="#2424a4"/><rect x="823.25" y="195.88" width="6.55" height="12.02" fill="#1e1e8e"/><rect x="823.25" y="207.50" width="6.55" height="12.02" fill="#2626bc"/><rect x="823.25" y="219.12" width="6.55" height="12.02" fill="#1e1e8e"/><rect x="823.25" y="230.74" width="6.55" height="12.02" fill="#2e34cc"/><rect x="823.25" y="242.36" width="6.55" height="12.02" fill="#12497c"/><rect x="823.25" y="253.98" width="6.55" height="12.02" fill="#1e3aa2"/><rect x="829.40" y="149.40" width="5.98" height="12.02" fill="#2b2fc4"/><rect x="829.40" y="161.02" width="5.98" height="12.02" fill="#2e34cc"/><rect x="829.40" y="172.64" width="5.98" height="12.02" fill="#2424a4"/><rect x="829.40" y="184.26" width="5.98" height="12.02" fill="#2e34cc"/><rect x="829.40" y="195.88" width="5.98" height="12.02" fill="#2b2fc4"/><rect x="829.40" y="207.50" width="5.98" height="12.02" fill="#17207a"/><rect x="829.40" y="219.12" width="5.98" height="12.02" fill="#2e34cc"/><rect x="829.40" y="230.74" width="5.98" height="12.02" fill="#1e1e8e"/><rect x="829.40" y="242.36" width="5.98" height="12.02" fill="#3b44d8"/><rect x="829.40" y="253.98" width="5.98" height="12.02" fill="#3a30c8"/><rect x="834.98" y="149.40" width="5.98" height="12.02" fill="#2e34cc"/><rect x="834.98" y="161.02" width="5.98" height="12.02" fill="#17207a"/><rect x="834.98" y="172.64" width="5.98" height="12.02" fill="#3a30c8"/><rect x="834.98" y="184.26" width="5.98" height="12.02" fill="#3a2a94"/><rect x="834.98" y="195.88" width="5.98" height="12.02" fill="#17207a"/><rect x="834.98" y="207.50" width="5.98" height="12.02" fill="#3a30c8"/><rect x="834.98" y="219.12" width="5.98" height="12.02" fill="#2e34cc"/><rect x="834.98" y="230.74" width="5.98" height="12.02" fill="#2e34cc"/><rect x="834.98" y="242.36" width="5.98" height="12.02" fill="#2626bc"/><rect x="834.98" y="253.98" width="5.98" height="12.02" fill="#17207a"/><rect x="840.55" y="149.40" width="5.98" height="12.02" fill="#2424a4"/><rect x="840.55" y="161.02" width="5.98" height="12.02" fill="#2424a4"/><rect x="840.55" y="172.64" width="5.98" height="12.02" fill="#2424a4"/><rect x="840.55" y="184.26" width="5.98" height="12.02" fill="#3a2a94"/><rect x="840.55" y="195.88" width="5.98" height="12.02" fill="#12497c"/><rect x="840.55" y="207.50" width="5.98" height="12.02" fill="#2b2fc4"/><rect x="840.55" y="219.12" width="5.98" height="12.02" fill="#2e34cc"/><rect x="840.55" y="230.74" width="5.98" height="12.02" fill="#1e3aa2"/><rect x="840.55" y="242.36" width="5.98" height="12.02" fill="#2424a4"/><rect x="840.55" y="253.98" width="5.98" height="12.02" fill="#3a2a94"/><rect x="846.12" y="149.40" width="5.98" height="12.02" fill="#1e3aa2"/><rect x="846.12" y="161.02" width="5.98" height="12.02" fill="#2626bc"/><rect x="846.12" y="172.64" width="5.98" height="12.02" fill="#1e1e8e"/><rect x="846.12" y="184.26" width="5.98" height="12.02" fill="#1e1e8e"/><rect x="846.12" y="195.88" width="5.98" height="12.02" fill="#2626bc"/><rect x="846.12" y="207.50" width="5.98" height="12.02" fill="#2e34cc"/><rect x="846.12" y="219.12" width="5.98" height="12.02" fill="#3a2a94"/><rect x="846.12" y="230.74" width="5.98" height="12.02" fill="#2626bc"/><rect x="846.12" y="242.36" width="5.98" height="12.02" fill="#2626bc"/><rect x="846.12" y="253.98" width="5.98" height="12.02" fill="#1e3aa2"/><rect x="851.70" y="149.40" width="6.12" height="12.02" fill="#3b44d8"/><rect x="851.70" y="161.02" width="6.12" height="12.02" fill="#2b2fc4"/><rect x="851.70" y="172.64" width="6.12" height="12.02" fill="#2626bc"/><rect x="851.70" y="184.26" width="6.12" height="12.02" fill="#1d4fb8"/><rect x="851.70" y="195.88" width="6.12" height="12.02" fill="#2424a4"/><rect x="851.70" y="207.50" width="6.12" height="12.02" fill="#1e3aa2"/><rect x="851.70" y="219.12" width="6.12" height="12.02" fill="#2626bc"/><rect x="851.70" y="230.74" width="6.12" height="12.02" fill="#2b2fc4"/><rect x="851.70" y="242.36" width="6.12" height="12.02" fill="#12497c"/><rect x="851.70" y="253.98" width="6.12" height="12.02" fill="#2e34cc"/><rect x="857.43" y="149.40" width="6.12" height="12.02" fill="#1e1e8e"/><rect x="857.43" y="161.02" width="6.12" height="12.02" fill="#2b2fc4"/><rect x="857.43" y="172.64" width="6.12" height="12.02" fill="#3a2a94"/><rect x="857.43" y="184.26" width="6.12" height="12.02" fill="#2b2fc4"/><rect x="857.43" y="195.88" width="6.12" height="12.02" fill="#1e3aa2"/><rect x="857.43" y="207.50" width="6.12" height="12.02" fill="#2b2fc4"/><rect x="857.43" y="219.12" width="6.12" height="12.02" fill="#1e1e8e"/><rect x="857.43" y="230.74" width="6.12" height="12.02" fill="#1e1e8e"/><rect x="857.43" y="242.36" width="6.12" height="12.02" fill="#2e34cc"/><rect x="857.43" y="253.98" width="6.12" height="12.02" fill="#2e34cc"/><rect x="863.15" y="149.40" width="6.12" height="12.02" fill="#2e34cc"/><rect x="863.15" y="161.02" width="6.12" height="12.02" fill="#1d4fb8"/><rect x="863.15" y="172.64" width="6.12" height="12.02" fill="#1e3aa2"/><rect x="863.15" y="184.26" width="6.12" height="12.02" fill="#2e34cc"/><rect x="863.15" y="195.88" width="6.12" height="12.02" fill="#2626bc"/><rect x="863.15" y="207.50" width="6.12" height="12.02" fill="#1e1e8e"/><rect x="863.15" y="219.12" width="6.12" height="12.02" fill="#1e1e8e"/><rect x="863.15" y="230.74" width="6.12" height="12.02" fill="#3a2a94"/><rect x="863.15" y="242.36" width="6.12" height="12.02" fill="#2e34cc"/><rect x="863.15" y="253.98" width="6.12" height="12.02" fill="#2626bc"/><rect x="868.88" y="149.40" width="6.12" height="12.02" fill="#2b2fc4"/><rect x="868.88" y="161.02" width="6.12" height="12.02" fill="#3b44d8"/><rect x="868.88" y="172.64" width="6.12" height="12.02" fill="#1e1e8e"/><rect x="868.88" y="184.26" width="6.12" height="12.02" fill="#3b44d8"/><rect x="868.88" y="195.88" width="6.12" height="12.02" fill="#3a2a94"/><rect x="868.88" y="207.50" width="6.12" height="12.02" fill="#2424a4"/><rect x="868.88" y="219.12" width="6.12" height="12.02" fill="#2626bc"/><rect x="868.88" y="230.74" width="6.12" height="12.02" fill="#1e1e8e"/><rect x="868.88" y="242.36" width="6.12" height="12.02" fill="#2e34cc"/><rect x="868.88" y="253.98" width="6.12" height="12.02" fill="#2e34cc"/><rect x="874.60" y="149.40" width="6.17" height="12.02" fill="#2424a4"/><rect x="874.60" y="161.02" width="6.17" height="12.02" fill="#3a30c8"/><rect x="874.60" y="172.64" width="6.17" height="12.02" fill="#2e34cc"/><rect x="874.60" y="184.26" width="6.17" height="12.02" fill="#1d4fb8"/><rect x="874.60" y="195.88" width="6.17" height="12.02" fill="#17207a"/><rect x="874.60" y="207.50" width="6.17" height="12.02" fill="#2424a4"/><rect x="874.60" y="219.12" width="6.17" height="12.02" fill="#3b44d8"/><rect x="874.60" y="230.74" width="6.17" height="12.02" fill="#2b2fc4"/><rect x="874.60" y="242.36" width="6.17" height="12.02" fill="#2626bc"/><rect x="874.60" y="253.98" width="6.17" height="12.02" fill="#2424a4"/><rect x="880.37" y="149.40" width="6.17" height="12.02" fill="#2626bc"/><rect x="880.37" y="161.02" width="6.17" height="12.02" fill="#2e34cc"/><rect x="880.37" y="172.64" width="6.17" height="12.02" fill="#3a30c8"/><rect x="880.37" y="184.26" width="6.17" height="12.02" fill="#2626bc"/><rect x="880.37" y="195.88" width="6.17" height="12.02" fill="#2e34cc"/><rect x="880.37" y="207.50" width="6.17" height="12.02" fill="#2e34cc"/><rect x="880.37" y="219.12" width="6.17" height="12.02" fill="#2e34cc"/><rect x="880.37" y="230.74" width="6.17" height="12.02" fill="#1e1e8e"/><rect x="880.37" y="242.36" width="6.17" height="12.02" fill="#2626bc"/><rect x="880.37" y="253.98" width="6.17" height="12.02" fill="#1d4fb8"/><rect x="886.13" y="149.40" width="6.17" height="12.02" fill="#1e3aa2"/><rect x="886.13" y="161.02" width="6.17" height="12.02" fill="#2626bc"/><rect x="886.13" y="172.64" width="6.17" height="12.02" fill="#2b2fc4"/><rect x="886.13" y="184.26" width="6.17" height="12.02" fill="#2b2fc4"/><rect x="886.13" y="195.88" width="6.17" height="12.02" fill="#2e34cc"/><rect x="886.13" y="207.50" width="6.17" height="12.02" fill="#1d4fb8"/><rect x="886.13" y="219.12" width="6.17" height="12.02" fill="#2b2fc4"/><rect x="886.13" y="230.74" width="6.17" height="12.02" fill="#2626bc"/><rect x="886.13" y="242.36" width="6.17" height="12.02" fill="#2e34cc"/><rect x="886.13" y="253.98" width="6.17" height="12.02" fill="#2b2fc4"/><rect x="891.90" y="149.40" width="6.18" height="12.02" fill="#2424a4"/><rect x="891.90" y="161.02" width="6.18" height="12.02" fill="#2424a4"/><rect x="891.90" y="172.64" width="6.18" height="12.02" fill="#2424a4"/><rect x="891.90" y="184.26" width="6.18" height="12.02" fill="#3b44d8"/><rect x="891.90" y="195.88" width="6.18" height="12.02" fill="#2e34cc"/><rect x="891.90" y="207.50" width="6.18" height="12.02" fill="#2e34cc"/><rect x="891.90" y="219.12" width="6.18" height="12.02" fill="#1e3aa2"/><rect x="891.90" y="230.74" width="6.18" height="12.02" fill="#1e3aa2"/><rect x="891.90" y="242.36" width="6.18" height="12.02" fill="#2e34cc"/><rect x="891.90" y="253.98" width="6.18" height="12.02" fill="#3a2a94"/><rect x="897.67" y="149.40" width="6.18" height="12.02" fill="#2e34cc"/><rect x="897.67" y="161.02" width="6.18" height="12.02" fill="#1e1e8e"/><rect x="897.67" y="172.64" width="6.18" height="12.02" fill="#2424a4"/><rect x="897.67" y="184.26" width="6.18" height="12.02" fill="#1e1e8e"/><rect x="897.67" y="195.88" width="6.18" height="12.02" fill="#1d4fb8"/><rect x="897.67" y="207.50" width="6.18" height="12.02" fill="#2424a4"/><rect x="897.67" y="219.12" width="6.18" height="12.02" fill="#3b44d8"/><rect x="897.67" y="230.74" width="6.18" height="12.02" fill="#3a30c8"/><rect x="897.67" y="242.36" width="6.18" height="12.02" fill="#2e34cc"/><rect x="897.67" y="253.98" width="6.18" height="12.02" fill="#1e1e8e"/><rect x="903.45" y="149.40" width="6.18" height="12.02" fill="#2626bc"/><rect x="903.45" y="161.02" width="6.18" height="12.02" fill="#1d4fb8"/><rect x="903.45" y="172.64" width="6.18" height="12.02" fill="#2424a4"/><rect x="903.45" y="184.26" width="6.18" height="12.02" fill="#1e3aa2"/><rect x="903.45" y="195.88" width="6.18" height="12.02" fill="#2626bc"/><rect x="903.45" y="207.50" width="6.18" height="12.02" fill="#2424a4"/><rect x="903.45" y="219.12" width="6.18" height="12.02" fill="#2626bc"/><rect x="903.45" y="230.74" width="6.18" height="12.02" fill="#2626bc"/><rect x="903.45" y="242.36" width="6.18" height="12.02" fill="#1e3aa2"/><rect x="903.45" y="253.98" width="6.18" height="12.02" fill="#2626bc"/><rect x="909.23" y="149.40" width="6.18" height="12.02" fill="#3b44d8"/><rect x="909.23" y="161.02" width="6.18" height="12.02" fill="#2b2fc4"/><rect x="909.23" y="172.64" width="6.18" height="12.02" fill="#2e34cc"/><rect x="909.23" y="184.26" width="6.18" height="12.02" fill="#2424a4"/><rect x="909.23" y="195.88" width="6.18" height="12.02" fill="#12497c"/><rect x="909.23" y="207.50" width="6.18" height="12.02" fill="#1e1e8e"/><rect x="909.23" y="219.12" width="6.18" height="12.02" fill="#2626bc"/><rect x="909.23" y="230.74" width="6.18" height="12.02" fill="#1e1e8e"/><rect x="909.23" y="242.36" width="6.18" height="12.02" fill="#1e1e8e"/><rect x="909.23" y="253.98" width="6.18" height="12.02" fill="#3a2a94"/><rect x="915.00" y="149.40" width="6.05" height="12.02" fill="#1e1e8e"/><rect x="915.00" y="161.02" width="6.05" height="12.02" fill="#3a2a94"/><rect x="915.00" y="172.64" width="6.05" height="12.02" fill="#2626bc"/><rect x="915.00" y="184.26" width="6.05" height="12.02" fill="#12497c"/><rect x="915.00" y="195.88" width="6.05" height="12.02" fill="#1e3aa2"/><rect x="915.00" y="207.50" width="6.05" height="12.02" fill="#1e3aa2"/><rect x="915.00" y="219.12" width="6.05" height="12.02" fill="#2b2fc4"/><rect x="915.00" y="230.74" width="6.05" height="12.02" fill="#1e1e8e"/><rect x="915.00" y="242.36" width="6.05" height="12.02" fill="#2b2fc4"/><rect x="915.00" y="253.98" width="6.05" height="12.02" fill="#2424a4"/><rect x="920.65" y="149.40" width="6.05" height="12.02" fill="#2e34cc"/><rect x="920.65" y="161.02" width="6.05" height="12.02" fill="#2424a4"/><rect x="920.65" y="172.64" width="6.05" height="12.02" fill="#3a2a94"/><rect x="920.65" y="184.26" width="6.05" height="12.02" fill="#2e34cc"/><rect x="920.65" y="195.88" width="6.05" height="12.02" fill="#2b2fc4"/><rect x="920.65" y="207.50" width="6.05" height="12.02" fill="#2b2fc4"/><rect x="920.65" y="219.12" width="6.05" height="12.02" fill="#2626bc"/><rect x="920.65" y="230.74" width="6.05" height="12.02" fill="#2626bc"/><rect x="920.65" y="242.36" width="6.05" height="12.02" fill="#2626bc"/><rect x="920.65" y="253.98" width="6.05" height="12.02" fill="#1e1e8e"/><rect x="926.30" y="149.40" width="6.05" height="12.02" fill="#2626bc"/><rect x="926.30" y="161.02" width="6.05" height="12.02" fill="#2626bc"/><rect x="926.30" y="172.64" width="6.05" height="12.02" fill="#1e3aa2"/><rect x="926.30" y="184.26" width="6.05" height="12.02" fill="#2424a4"/><rect x="926.30" y="195.88" width="6.05" height="12.02" fill="#2424a4"/><rect x="926.30" y="207.50" width="6.05" height="12.02" fill="#2626bc"/><rect x="926.30" y="219.12" width="6.05" height="12.02" fill="#2626bc"/><rect x="926.30" y="230.74" width="6.05" height="12.02" fill="#2e34cc"/><rect x="926.30" y="242.36" width="6.05" height="12.02" fill="#2626bc"/><rect x="926.30" y="253.98" width="6.05" height="12.02" fill="#2e34cc"/><rect x="931.95" y="149.40" width="6.05" height="12.02" fill="#2626bc"/><rect x="931.95" y="161.02" width="6.05" height="12.02" fill="#1e3aa2"/><rect x="931.95" y="172.64" width="6.05" height="12.02" fill="#1e3aa2"/><rect x="931.95" y="184.26" width="6.05" height="12.02" fill="#1e1e8e"/><rect x="931.95" y="195.88" width="6.05" height="12.02" fill="#2424a4"/><rect x="931.95" y="207.50" width="6.05" height="12.02" fill="#3a30c8"/><rect x="931.95" y="219.12" width="6.05" height="12.02" fill="#2b2fc4"/><rect x="931.95" y="230.74" width="6.05" height="12.02" fill="#2b2fc4"/><rect x="931.95" y="242.36" width="6.05" height="12.02" fill="#3a2a94"/><rect x="931.95" y="253.98" width="6.05" height="12.02" fill="#2424a4"/><rect x="937.60" y="149.40" width="6.32" height="12.02" fill="#3b44d8"/><rect x="937.60" y="161.02" width="6.32" height="12.02" fill="#2626bc"/><rect x="937.60" y="172.64" width="6.32" height="12.02" fill="#2b2fc4"/><rect x="937.60" y="184.26" width="6.32" height="12.02" fill="#2626bc"/><rect x="937.60" y="195.88" width="6.32" height="12.02" fill="#2b2fc4"/><rect x="937.60" y="207.50" width="6.32" height="12.02" fill="#2626bc"/><rect x="937.60" y="219.12" width="6.32" height="12.02" fill="#2424a4"/><rect x="937.60" y="230.74" width="6.32" height="12.02" fill="#3b44d8"/><rect x="937.60" y="242.36" width="6.32" height="12.02" fill="#2424a4"/><rect x="937.60" y="253.98" width="6.32" height="12.02" fill="#2626bc"/><rect x="943.52" y="149.40" width="6.32" height="12.02" fill="#3a30c8"/><rect x="943.52" y="161.02" width="6.32" height="12.02" fill="#2e34cc"/><rect x="943.52" y="172.64" width="6.32" height="12.02" fill="#2e34cc"/><rect x="943.52" y="184.26" width="6.32" height="12.02" fill="#2424a4"/><rect x="943.52" y="195.88" width="6.32" height="12.02" fill="#3b44d8"/><rect x="943.52" y="207.50" width="6.32" height="12.02" fill="#2e34cc"/><rect x="943.52" y="219.12" width="6.32" height="12.02" fill="#2e34cc"/><rect x="943.52" y="230.74" width="6.32" height="12.02" fill="#2b2fc4"/><rect x="943.52" y="242.36" width="6.32" height="12.02" fill="#2626bc"/><rect x="943.52" y="253.98" width="6.32" height="12.02" fill="#3a2a94"/><rect x="949.45" y="149.40" width="6.32" height="12.02" fill="#2e34cc"/><rect x="949.45" y="161.02" width="6.32" height="12.02" fill="#17207a"/><rect x="949.45" y="172.64" width="6.32" height="12.02" fill="#1e3aa2"/><rect x="949.45" y="184.26" width="6.32" height="12.02" fill="#2b2fc4"/><rect x="949.45" y="195.88" width="6.32" height="12.02" fill="#1e1e8e"/><rect x="949.45" y="207.50" width="6.32" height="12.02" fill="#2e34cc"/><rect x="949.45" y="219.12" width="6.32" height="12.02" fill="#17207a"/><rect x="949.45" y="230.74" width="6.32" height="12.02" fill="#1e3aa2"/><rect x="949.45" y="242.36" width="6.32" height="12.02" fill="#2424a4"/><rect x="949.45" y="253.98" width="6.32" height="12.02" fill="#2626bc"/><rect x="955.38" y="149.40" width="6.32" height="12.02" fill="#3a30c8"/><rect x="955.38" y="161.02" width="6.32" height="12.02" fill="#2e34cc"/><rect x="955.38" y="172.64" width="6.32" height="12.02" fill="#3a30c8"/><rect x="955.38" y="184.26" width="6.32" height="12.02" fill="#2626bc"/><rect x="955.38" y="195.88" width="6.32" height="12.02" fill="#2424a4"/><rect x="955.38" y="207.50" width="6.32" height="12.02" fill="#2424a4"/><rect x="955.38" y="219.12" width="6.32" height="12.02" fill="#1e1e8e"/><rect x="955.38" y="230.74" width="6.32" height="12.02" fill="#2424a4"/><rect x="955.38" y="242.36" width="6.32" height="12.02" fill="#1d4fb8"/><rect x="955.38" y="253.98" width="6.32" height="12.02" fill="#3a2a94"/><rect x="961.30" y="149.40" width="6.18" height="12.02" fill="#2626bc"/><rect x="961.30" y="161.02" width="6.18" height="12.02" fill="#2626bc"/><rect x="961.30" y="172.64" width="6.18" height="12.02" fill="#2b2fc4"/><rect x="961.30" y="184.26" width="6.18" height="12.02" fill="#2b2fc4"/><rect x="961.30" y="195.88" width="6.18" height="12.02" fill="#2b2fc4"/><rect x="961.30" y="207.50" width="6.18" height="12.02" fill="#2424a4"/><rect x="961.30" y="219.12" width="6.18" height="12.02" fill="#2626bc"/><rect x="961.30" y="230.74" width="6.18" height="12.02" fill="#2424a4"/><rect x="961.30" y="242.36" width="6.18" height="12.02" fill="#2424a4"/><rect x="961.30" y="253.98" width="6.18" height="12.02" fill="#2e34cc"/><rect x="967.07" y="149.40" width="6.18" height="12.02" fill="#2626bc"/><rect x="967.07" y="161.02" width="6.18" height="12.02" fill="#2b2fc4"/><rect x="967.07" y="172.64" width="6.18" height="12.02" fill="#2626bc"/><rect x="967.07" y="184.26" width="6.18" height="12.02" fill="#2626bc"/><rect x="967.07" y="195.88" width="6.18" height="12.02" fill="#2626bc"/><rect x="967.07" y="207.50" width="6.18" height="12.02" fill="#1e3aa2"/><rect x="967.07" y="219.12" width="6.18" height="12.02" fill="#1e3aa2"/><rect x="967.07" y="230.74" width="6.18" height="12.02" fill="#1e3aa2"/><rect x="967.07" y="242.36" width="6.18" height="12.02" fill="#2626bc"/><rect x="967.07" y="253.98" width="6.18" height="12.02" fill="#2626bc"/><rect x="972.85" y="149.40" width="6.18" height="12.02" fill="#2424a4"/><rect x="972.85" y="161.02" width="6.18" height="12.02" fill="#3a2a94"/><rect x="972.85" y="172.64" width="6.18" height="12.02" fill="#2e34cc"/><rect x="972.85" y="184.26" width="6.18" height="12.02" fill="#1e1e8e"/><rect x="972.85" y="195.88" width="6.18" height="12.02" fill="#2b2fc4"/><rect x="972.85" y="207.50" width="6.18" height="12.02" fill="#3b44d8"/><rect x="972.85" y="219.12" width="6.18" height="12.02" fill="#3a2a94"/><rect x="972.85" y="230.74" width="6.18" height="12.02" fill="#2b2fc4"/><rect x="972.85" y="242.36" width="6.18" height="12.02" fill="#2626bc"/><rect x="972.85" y="253.98" width="6.18" height="12.02" fill="#2e34cc"/><rect x="978.62" y="149.40" width="6.18" height="12.02" fill="#2626bc"/><rect x="978.62" y="161.02" width="6.18" height="12.02" fill="#2424a4"/><rect x="978.62" y="172.64" width="6.18" height="12.02" fill="#2626bc"/><rect x="978.62" y="184.26" width="6.18" height="12.02" fill="#2424a4"/><rect x="978.62" y="195.88" width="6.18" height="12.02" fill="#17207a"/><rect x="978.62" y="207.50" width="6.18" height="12.02" fill="#2626bc"/><rect x="978.62" y="219.12" width="6.18" height="12.02" fill="#1e1e8e"/><rect x="978.62" y="230.74" width="6.18" height="12.02" fill="#1e1e8e"/><rect x="978.62" y="242.36" width="6.18" height="12.02" fill="#2e34cc"/><rect x="978.62" y="253.98" width="6.18" height="12.02" fill="#3b44d8"/><rect x="984.40" y="149.40" width="6.00" height="12.02" fill="#2e34cc"/><rect x="984.40" y="161.02" width="6.00" height="12.02" fill="#3b44d8"/><rect x="984.40" y="172.64" width="6.00" height="12.02" fill="#1e3aa2"/><rect x="984.40" y="184.26" width="6.00" height="12.02" fill="#2e34cc"/><rect x="984.40" y="195.88" width="6.00" height="12.02" fill="#1e1e8e"/><rect x="984.40" y="207.50" width="6.00" height="12.02" fill="#12497c"/><rect x="984.40" y="219.12" width="6.00" height="12.02" fill="#2626bc"/><rect x="984.40" y="230.74" width="6.00" height="12.02" fill="#3a30c8"/><rect x="984.40" y="242.36" width="6.00" height="12.02" fill="#2626bc"/><rect x="984.40" y="253.98" width="6.00" height="12.02" fill="#1e1e8e"/><rect x="990.00" y="149.40" width="6.00" height="12.02" fill="#2626bc"/><rect x="990.00" y="161.02" width="6.00" height="12.02" fill="#1e1e8e"/><rect x="990.00" y="172.64" width="6.00" height="12.02" fill="#2424a4"/><rect x="990.00" y="184.26" width="6.00" height="12.02" fill="#1e3aa2"/><rect x="990.00" y="195.88" width="6.00" height="12.02" fill="#2b2fc4"/><rect x="990.00" y="207.50" width="6.00" height="12.02" fill="#2e34cc"/><rect x="990.00" y="219.12" width="6.00" height="12.02" fill="#3a2a94"/><rect x="990.00" y="230.74" width="6.00" height="12.02" fill="#1e3aa2"/><rect x="990.00" y="242.36" width="6.00" height="12.02" fill="#3a2a94"/><rect x="990.00" y="253.98" width="6.00" height="12.02" fill="#3a2a94"/><rect x="995.60" y="149.40" width="6.00" height="12.02" fill="#17207a"/><rect x="995.60" y="161.02" width="6.00" height="12.02" fill="#1e1e8e"/><rect x="995.60" y="172.64" width="6.00" height="12.02" fill="#2626bc"/><rect x="995.60" y="184.26" width="6.00" height="12.02" fill="#1e1e8e"/><rect x="995.60" y="195.88" width="6.00" height="12.02" fill="#2424a4"/><rect x="995.60" y="207.50" width="6.00" height="12.02" fill="#2b2fc4"/><rect x="995.60" y="219.12" width="6.00" height="12.02" fill="#2e34cc"/><rect x="995.60" y="230.74" width="6.00" height="12.02" fill="#2b2fc4"/><rect x="995.60" y="242.36" width="6.00" height="12.02" fill="#3a2a94"/><rect x="995.60" y="253.98" width="6.00" height="12.02" fill="#1d4fb8"/><rect x="1001.20" y="149.40" width="6.00" height="12.02" fill="#2e34cc"/><rect x="1001.20" y="161.02" width="6.00" height="12.02" fill="#2626bc"/><rect x="1001.20" y="172.64" width="6.00" height="12.02" fill="#2424a4"/><rect x="1001.20" y="184.26" width="6.00" height="12.02" fill="#2b2fc4"/><rect x="1001.20" y="195.88" width="6.00" height="12.02" fill="#2424a4"/><rect x="1001.20" y="207.50" width="6.00" height="12.02" fill="#2424a4"/><rect x="1001.20" y="219.12" width="6.00" height="12.02" fill="#2626bc"/><rect x="1001.20" y="230.74" width="6.00" height="12.02" fill="#1e1e8e"/><rect x="1001.20" y="242.36" width="6.00" height="12.02" fill="#2b2fc4"/><rect x="1001.20" y="253.98" width="6.00" height="12.02" fill="#1e3aa2"/></g>
<rect x="339.90" y="149.4" width="1" height="116.20" fill="#dfe6f6" fill-opacity="0.7"/><rect x="363.00" y="149.4" width="1" height="116.20" fill="#dfe6f6" fill-opacity="0.7"/><rect x="386.20" y="149.4" width="1" height="116.20" fill="#dfe6f6" fill-opacity="0.7"/><rect x="408.90" y="149.4" width="1" height="116.20" fill="#dfe6f6" fill-opacity="0.7"/><rect x="432.10" y="149.4" width="1" height="116.20" fill="#dfe6f6" fill-opacity="0.7"/><rect x="454.90" y="149.4" width="1" height="116.20" fill="#dfe6f6" fill-opacity="0.7"/><rect x="472.80" y="149.4" width="1" height="116.20" fill="#dfe6f6" fill-opacity="0.7"/><rect x="495.10" y="149.4" width="1" height="116.20" fill="#dfe6f6" fill-opacity="0.7"/><rect x="518.00" y="149.4" width="1" height="116.20" fill="#dfe6f6" fill-opacity="0.7"/><rect x="540.90" y="149.4" width="1" height="116.20" fill="#dfe6f6" fill-opacity="0.7"/><rect x="563.80" y="149.4" width="1" height="116.20" fill="#dfe6f6" fill-opacity="0.7"/><rect x="586.70" y="149.4" width="1" height="116.20" fill="#dfe6f6" fill-opacity="0.7"/><rect x="604.10" y="149.4" width="1" height="116.20" fill="#dfe6f6" fill-opacity="0.7"/><rect x="627.00" y="149.4" width="1" height="116.20" fill="#dfe6f6" fill-opacity="0.7"/><rect x="650.60" y="149.4" width="1" height="116.20" fill="#dfe6f6" fill-opacity="0.7"/><rect x="672.80" y="149.4" width="1" height="116.20" fill="#dfe6f6" fill-opacity="0.7"/><rect x="696.00" y="149.4" width="1" height="116.20" fill="#dfe6f6" fill-opacity="0.7"/><rect x="719.10" y="149.4" width="1" height="116.20" fill="#dfe6f6" fill-opacity="0.7"/><rect x="736.70" y="149.4" width="1" height="116.20" fill="#dfe6f6" fill-opacity="0.7"/><rect x="759.90" y="149.4" width="1" height="116.20" fill="#dfe6f6" fill-opacity="0.7"/><rect x="782.10" y="149.4" width="1" height="116.20" fill="#dfe6f6" fill-opacity="0.7"/><rect x="804.30" y="149.4" width="1" height="116.20" fill="#dfe6f6" fill-opacity="0.7"/><rect x="828.90" y="149.4" width="1" height="116.20" fill="#dfe6f6" fill-opacity="0.7"/><rect x="851.20" y="149.4" width="1" height="116.20" fill="#dfe6f6" fill-opacity="0.7"/><rect x="874.10" y="149.4" width="1" height="116.20" fill="#dfe6f6" fill-opacity="0.7"/><rect x="891.40" y="149.4" width="1" height="116.20" fill="#dfe6f6" fill-opacity="0.7"/><rect x="914.50" y="149.4" width="1" height="116.20" fill="#dfe6f6" fill-opacity="0.7"/><rect x="937.10" y="149.4" width="1" height="116.20" fill="#dfe6f6" fill-opacity="0.7"/><rect x="960.80" y="149.4" width="1" height="116.20" fill="#dfe6f6" fill-opacity="0.7"/><rect x="983.90" y="149.4" width="1" height="116.20" fill="#dfe6f6" fill-opacity="0.7"/>
<rect x="1007.2" y="149.4" width="11" height="11.620000000000001" fill="#d4eee4"/>
<rect x="1007.2" y="161.02" width="11" height="46.480000000000004" fill="#93d5bb"/>
<rect x="1007.2" y="207.5" width="11" height="46.480000000000004" fill="#d4eee4"/>
<rect x="1007.2" y="253.98000000000002" width="11" height="11.620000000000001" fill="#93d5bb"/>
<path d="M318 156.5 H1014" stroke="#a09d90" stroke-width="1" stroke-dasharray="3 3" stroke-opacity="0.8"/>
<path d="M510.5 136.5 V279" stroke="#5b6472" stroke-width="1" stroke-dasharray="2 2"/>
<rect x="369.3" y="279.3" width="1" height="7.2" fill="#eceef2"/>
<text x="358.25" y="297" font-family="Liberation Sans" font-size="8.8" fill="#6b7483" textLength="23.10" lengthAdjust="spacingAndGlyphs">30 Jun</text>
<rect x="426.7" y="279.3" width="1" height="7.2" fill="#eceef2"/>
<text x="417.45" y="297" font-family="Liberation Sans" font-size="8.8" fill="#6b7483" textLength="19.50" lengthAdjust="spacingAndGlyphs">10:10</text>
<rect x="484.2" y="279.3" width="1" height="7.2" fill="#eceef2"/>
<text x="474.95" y="297" font-family="Liberation Sans" font-size="8.8" fill="#6b7483" textLength="19.50" lengthAdjust="spacingAndGlyphs">10:15</text>
<rect x="541.6" y="279.3" width="1" height="7.2" fill="#eceef2"/>
<text x="532.35" y="297" font-family="Liberation Sans" font-size="8.8" fill="#6b7483" textLength="19.50" lengthAdjust="spacingAndGlyphs">10:20</text>
<rect x="599.1" y="279.3" width="1" height="7.2" fill="#eceef2"/>
<text x="589.85" y="297" font-family="Liberation Sans" font-size="8.8" fill="#6b7483" textLength="19.50" lengthAdjust="spacingAndGlyphs">10:25</text>
<rect x="656.5" y="279.3" width="1" height="7.2" fill="#eceef2"/>
<text x="647.25" y="297" font-family="Liberation Sans" font-size="8.8" fill="#6b7483" textLength="19.50" lengthAdjust="spacingAndGlyphs">10:30</text>
<rect x="714.0" y="279.3" width="1" height="7.2" fill="#eceef2"/>
<text x="704.75" y="297" font-family="Liberation Sans" font-size="8.8" fill="#6b7483" textLength="19.50" lengthAdjust="spacingAndGlyphs">10:35</text>
<rect x="771.5" y="279.3" width="1" height="7.2" fill="#eceef2"/>
<text x="762.25" y="297" font-family="Liberation Sans" font-size="8.8" fill="#6b7483" textLength="19.50" lengthAdjust="spacingAndGlyphs">10:40</text>
<rect x="828.9" y="279.3" width="1" height="7.2" fill="#eceef2"/>
<text x="819.65" y="297" font-family="Liberation Sans" font-size="8.8" fill="#6b7483" textLength="19.50" lengthAdjust="spacingAndGlyphs">10:45</text>
<rect x="886.4" y="279.3" width="1" height="7.2" fill="#eceef2"/>
<text x="877.15" y="297" font-family="Liberation Sans" font-size="8.8" fill="#6b7483" textLength="19.50" lengthAdjust="spacingAndGlyphs">10:50</text>
<rect x="943.8" y="279.3" width="1" height="7.2" fill="#eceef2"/>
<text x="934.55" y="297" font-family="Liberation Sans" font-size="8.8" fill="#6b7483" textLength="19.50" lengthAdjust="spacingAndGlyphs">10:55</text>
<rect x="1001.3" y="279.3" width="1" height="7.2" fill="#eceef2"/>
<text x="992.05" y="297" font-family="Liberation Sans" font-size="8.8" fill="#6b7483" textLength="19.50" lengthAdjust="spacingAndGlyphs">11:00</text>
<defs><pattern id="pat333" width="2.2" height="2.2" patternUnits="userSpaceOnUse"><rect width="2.2" height="2.2" fill="#9fd3e6"/><rect width="1.1" height="1.1" fill="#6f9ee8"/><rect x="1.1" y="1.1" width="1.1" height="1.1" fill="#c8ecdf"/></pattern></defs>
<rect x="1024" y="126.3" width="8.5" height="8.5" rx="1.5" fill="#3b2a8f"/>
<text x="1035.10" y="135" font-family="Liberation Mono" font-size="9" fill="#4b5565" textLength="21.50" lengthAdjust="spacingAndGlyphs">&lt;982</text>
<rect x="1024" y="141.3" width="8.5" height="8.5" rx="1.5" fill="#2626a0"/>
<text x="1035.10" y="150" font-family="Liberation Mono" font-size="9" fill="#4b5565" textLength="21.50" lengthAdjust="spacingAndGlyphs">&lt;852</text>
<rect x="1024" y="156.3" width="8.5" height="8.5" rx="1.5" fill="#1d4fb8"/>
<text x="1035.10" y="165" font-family="Liberation Mono" font-size="9" fill="#4b5565" textLength="21.50" lengthAdjust="spacingAndGlyphs">&lt;722</text>
<rect x="1024" y="171.3" width="8.5" height="8.5" rx="1.5" fill="#1673d1"/>
<text x="1035.10" y="180" font-family="Liberation Mono" font-size="9" fill="#4b5565" textLength="21.50" lengthAdjust="spacingAndGlyphs">&lt;592</text>
<rect x="1024" y="186.3" width="8.5" height="8.5" rx="1.5" fill="#4ec3e0"/>
<text x="1035.10" y="195" font-family="Liberation Mono" font-size="9" fill="#4b5565" textLength="21.50" lengthAdjust="spacingAndGlyphs">&lt;463</text>
<rect x="1024" y="201.3" width="8.5" height="8.5" rx="1.5" fill="url(#pat333)"/>
<text x="1035.10" y="210" font-family="Liberation Mono" font-size="9" fill="#4b5565" textLength="21.50" lengthAdjust="spacingAndGlyphs">&lt;333</text>
<rect x="1024" y="216.3" width="8.5" height="8.5" rx="1.5" fill="#d3eee4"/>
<text x="1035.10" y="225" font-family="Liberation Mono" font-size="9" fill="#4b5565" textLength="21.50" lengthAdjust="spacingAndGlyphs">&lt;203</text>
<rect x="272" y="340.5" width="796" height="53" rx="6" fill="#ffffff"/>
<path d="M272 367 H1068 V387.5 a6 6 0 0 1 -6 6 H278 a6 6 0 0 1 -6 -6z" fill="#fbfcfd"/>
<rect x="272" y="366" width="796" height="1.6" fill="#e3e6eb"/>
<rect x="291.4" y="367.5" width="0.8" height="26" fill="#eceef2"/>
<text x="588.90" y="357" font-family="Liberation Mono" font-size="10.3" fill="#374151" textLength="180.90" lengthAdjust="spacingAndGlyphs">HISTOGRAM(resp_body_size_bytes)</text>
<rect x="277.4" y="376.9" width="8.4" height="7.8" rx="1.5" fill="#137a3e"/>
<rect x="298.2" y="376.9" width="7.800000000000011" height="7.8" fill="#d4efe4"/>
<rect x="306" y="376.9" width="15.100000000000023" height="7.8" fill="#1a6fd0"/>
<rect x="321.1" y="376.9" width="7.399999999999977" height="7.8" fill="#3a2a9a"/>
<rect x="328.5" y="376.9" width="7.399999999999977" height="7.8" fill="#1a73d0"/>
<rect x="335.9" y="376.9" width="7.300000000000011" height="7.8" fill="#d4efe4"/>
<rect x="343.2" y="376.9" width="7.800000000000011" height="7.8" fill="#1a73d0"/>
<rect x="351" y="376.9" width="22.399999999999977" height="7.8" fill="#2228a0"/>
<text x="271.70" y="428" font-family="Liberation Mono" font-size="9.8" fill="#6b7483" textLength="161.00" lengthAdjust="spacingAndGlyphs">Examined 510,072 rows (&lt;453ms)</text>
<text x="782.90" y="428" font-family="Liberation Mono" font-size="9.8" fill="#6b7483" textLength="284.70" lengthAdjust="spacingAndGlyphs">Jun 30, 10:00:46 — Jun 30, 11:00:46 (auto resolution)</text>
<defs><filter id="tsh" x="-10%" y="-10%" width="120%" height="120%"><feDropShadow dx="0" dy="1" stdDeviation="1.5" flood-color="#000" flood-opacity="0.12"/></filter></defs>
<rect x="518" y="151" width="113.6" height="193.6" rx="4" fill="#fcfcfd" fill-opacity="0.975" stroke="#e3e6eb" stroke-width="0.8" filter="url(#tsh)"/>
<text x="524.50" y="168" font-family="Liberation Sans" font-size="11.3" fill="#374151" textLength="86.00" lengthAdjust="spacingAndGlyphs">Jun 30, 10:17:00</text>
<rect x="530.5" y="174" width="94.5" height="16.2" fill="#f1f2f5"/>
<rect x="524.4" y="174.0" width="5.7" height="15.8" fill="#1a6fd0"/>
<text x="537.30" y="186" font-family="Liberation Mono" font-size="10.4" font-weight="bold" fill="#111827" textLength="37.60" lengthAdjust="spacingAndGlyphs">5,486.5</text>
<text x="608.00" y="186" font-family="Liberation Mono" font-size="10.4" font-weight="bold" fill="#111827" textLength="16.10" lengthAdjust="spacingAndGlyphs">528</text>
<rect x="524.4" y="190.5" width="5.7" height="15.8" fill="#a9c0f0"/>
<text x="537.30" y="202" font-family="Liberation Mono" font-size="10.4" fill="#737b89" textLength="43.20" lengthAdjust="spacingAndGlyphs">5,029.85</text>
<text x="608.00" y="202" font-family="Liberation Mono" font-size="10.4" fill="#9aa2ae" textLength="16.10" lengthAdjust="spacingAndGlyphs">594</text>
<rect x="524.4" y="207.0" width="5.7" height="15.8" fill="#8fa8e8"/>
<text x="537.30" y="218" font-family="Liberation Mono" font-size="10.4" fill="#737b89" textLength="37.60" lengthAdjust="spacingAndGlyphs">4,573.2</text>
<text x="608.00" y="218" font-family="Liberation Mono" font-size="10.4" fill="#9aa2ae" textLength="16.10" lengthAdjust="spacingAndGlyphs">628</text>
<rect x="524.4" y="223.5" width="5.7" height="15.8" fill="#8a9ee4"/>
<text x="537.30" y="235" font-family="Liberation Mono" font-size="10.4" fill="#737b89" textLength="43.20" lengthAdjust="spacingAndGlyphs">4,116.55</text>
<text x="608.00" y="235" font-family="Liberation Mono" font-size="10.4" fill="#9aa2ae" textLength="16.10" lengthAdjust="spacingAndGlyphs">756</text>
<rect x="524.4" y="240.0" width="5.7" height="15.8" fill="#8898c4"/>
<text x="537.30" y="252" font-family="Liberation Mono" font-size="10.4" fill="#737b89" textLength="37.60" lengthAdjust="spacingAndGlyphs">3,659.9</text>
<text x="608.00" y="252" font-family="Liberation Mono" font-size="10.4" fill="#9aa2ae" textLength="16.10" lengthAdjust="spacingAndGlyphs">588</text>
<rect x="524.4" y="256.5" width="5.7" height="15.8" fill="#98b0f0"/>
<text x="537.30" y="268" font-family="Liberation Mono" font-size="10.4" fill="#737b89" textLength="43.20" lengthAdjust="spacingAndGlyphs">3,203.25</text>
<text x="608.00" y="268" font-family="Liberation Mono" font-size="10.4" fill="#9aa2ae" textLength="16.10" lengthAdjust="spacingAndGlyphs">626</text>
<rect x="524.4" y="273.0" width="5.7" height="15.8" fill="#8c9cc8"/>
<text x="537.30" y="284" font-family="Liberation Mono" font-size="10.4" fill="#737b89" textLength="37.60" lengthAdjust="spacingAndGlyphs">2,746.6</text>
<text x="608.00" y="284" font-family="Liberation Mono" font-size="10.4" fill="#9aa2ae" textLength="16.10" lengthAdjust="spacingAndGlyphs">580</text>
<rect x="524.4" y="289.5" width="5.7" height="15.8" fill="#8898c8"/>
<text x="537.30" y="301" font-family="Liberation Mono" font-size="10.4" fill="#737b89" textLength="43.20" lengthAdjust="spacingAndGlyphs">2,289.95</text>
<text x="608.00" y="301" font-family="Liberation Mono" font-size="10.4" fill="#9aa2ae" textLength="16.10" lengthAdjust="spacingAndGlyphs">700</text>
<rect x="524.4" y="306.0" width="5.7" height="15.8" fill="#90a8f0"/>
<text x="537.30" y="318" font-family="Liberation Mono" font-size="10.4" fill="#737b89" textLength="37.60" lengthAdjust="spacingAndGlyphs">1,833.3</text>
<text x="608.00" y="318" font-family="Liberation Mono" font-size="10.4" fill="#9aa2ae" textLength="16.10" lengthAdjust="spacingAndGlyphs">614</text>
<rect x="524.4" y="322.5" width="5.7" height="15.8" fill="#a8c0f0"/>
<text x="537.30" y="334" font-family="Liberation Mono" font-size="10.4" fill="#737b89" textLength="43.20" lengthAdjust="spacingAndGlyphs">1,376.65</text>
<text x="608.00" y="334" font-family="Liberation Mono" font-size="10.4" fill="#9aa2ae" textLength="16.10" lengthAdjust="spacingAndGlyphs">598</text>
</svg></body></html>
